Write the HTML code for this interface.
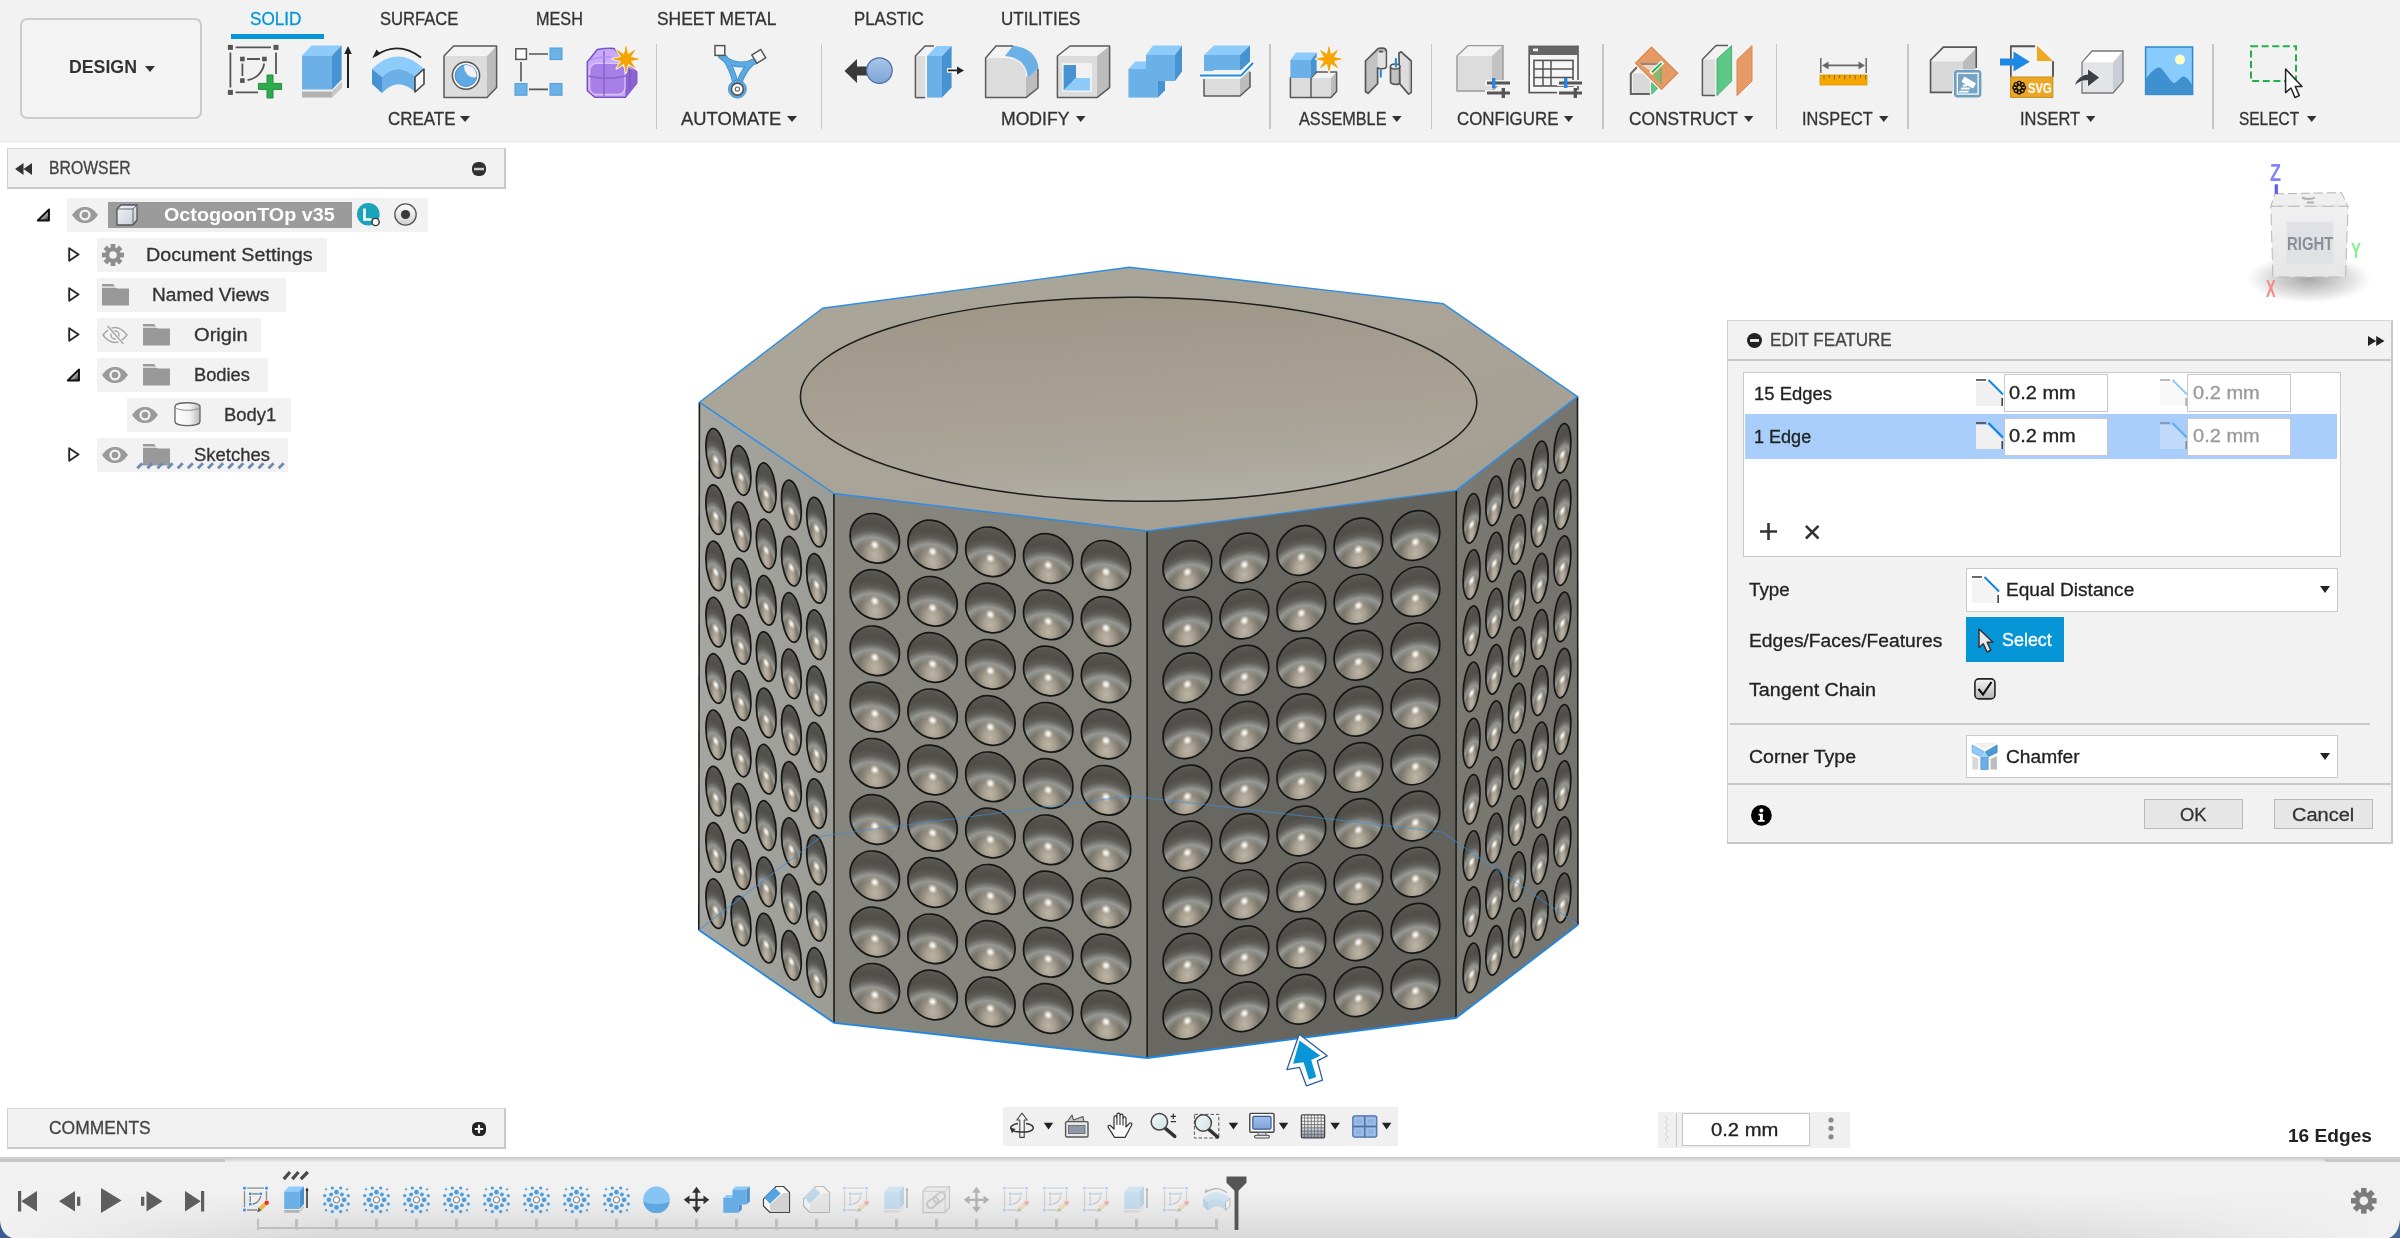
<!DOCTYPE html>
<html><head><meta charset="utf-8"><title>Fusion</title><style>
html,body{margin:0;padding:0;background:#fff;}
body{width:2400px;height:1238px;position:relative;overflow:hidden;font-family:"Liberation Sans",sans-serif;}
.t{position:absolute;white-space:nowrap;transform-origin:0 0;}
.b{position:absolute;box-sizing:border-box;}
svg{overflow:visible;}
</style></head><body>
<div class="b" style="left:0.0px;top:0.0px;width:2400.0px;height:141.0px;background:#f2f2f2;"></div>
<div class="b" style="left:0.0px;top:141.0px;width:2400.0px;height:2.0px;background:linear-gradient(#e4e4e4,#fafafa);"></div>
<div class="b" style="left:19.5px;top:17.5px;width:182.5px;height:101.0px;border:2px solid #cbcbcb;border-radius:7px;background:#f3f3f3;"></div>
<div class="t" style="left:69.0px;top:58.3px;font-size:18.56px;line-height:18.56px;color:#333;font-weight:bold;transform:scaleX(0.9555);">DESIGN</div>
<svg class="b" style="left:145.0px;top:65.5px;" width="10" height="6.0" viewBox="0 0 10 6.0"><path d="M0 0H10L5.0 6.0Z" fill="#333"/></svg>
<div class="t" style="left:250.3px;top:9.5px;font-size:18.35px;line-height:18.35px;color:#0696d7;-webkit-text-stroke:0.3px #0696d7;transform:scaleX(0.9343);">SOLID</div>
<div class="b" style="left:231.0px;top:34.0px;width:93.0px;height:4.8px;background:#0696d7;"></div>
<div class="t" style="left:380.3px;top:9.5px;font-size:18.35px;line-height:18.35px;color:#333;-webkit-text-stroke:0.3px #333;transform:scaleX(0.9048);">SURFACE</div>
<div class="t" style="left:535.9px;top:9.5px;font-size:18.35px;line-height:18.35px;color:#333;-webkit-text-stroke:0.3px #333;transform:scaleX(0.8837);">MESH</div>
<div class="t" style="left:657.3px;top:9.5px;font-size:18.35px;line-height:18.35px;color:#333;-webkit-text-stroke:0.3px #333;transform:scaleX(0.9493);">SHEET METAL</div>
<div class="t" style="left:854.3px;top:9.5px;font-size:18.35px;line-height:18.35px;color:#333;-webkit-text-stroke:0.3px #333;transform:scaleX(0.9128);">PLASTIC</div>
<div class="t" style="left:1000.9px;top:9.5px;font-size:18.35px;line-height:18.35px;color:#333;-webkit-text-stroke:0.3px #333;transform:scaleX(0.9269);">UTILITIES</div>
<div class="t" style="left:388.3px;top:109.5px;font-size:18.35px;line-height:18.35px;color:#333;-webkit-text-stroke:0.3px #333;transform:scaleX(0.9234);">CREATE</div>
<svg class="b" style="left:460.0px;top:115.5px;" width="10" height="6.0" viewBox="0 0 10 6.0"><path d="M0 0H10L5.0 6.0Z" fill="#333"/></svg>
<div class="t" style="left:681.3px;top:109.5px;font-size:18.35px;line-height:18.35px;color:#333;-webkit-text-stroke:0.3px #333;transform:scaleX(1.0010);">AUTOMATE</div>
<svg class="b" style="left:787.0px;top:115.5px;" width="10" height="6.0" viewBox="0 0 10 6.0"><path d="M0 0H10L5.0 6.0Z" fill="#333"/></svg>
<div class="t" style="left:1001.3px;top:109.5px;font-size:18.35px;line-height:18.35px;color:#333;-webkit-text-stroke:0.3px #333;transform:scaleX(0.9585);">MODIFY</div>
<svg class="b" style="left:1076.0px;top:115.5px;" width="9.5" height="6.0" viewBox="0 0 9.5 6.0"><path d="M0 0H9.5L4.75 6.0Z" fill="#333"/></svg>
<div class="t" style="left:1298.7px;top:109.5px;font-size:18.35px;line-height:18.35px;color:#333;-webkit-text-stroke:0.3px #333;transform:scaleX(0.8843);">ASSEMBLE</div>
<svg class="b" style="left:1392.0px;top:115.5px;" width="9.599999999999909" height="6.0" viewBox="0 0 9.599999999999909 6.0"><path d="M0 0H9.599999999999909L4.7999999999999545 6.0Z" fill="#333"/></svg>
<div class="t" style="left:1456.9px;top:109.5px;font-size:18.35px;line-height:18.35px;color:#333;-webkit-text-stroke:0.3px #333;transform:scaleX(0.9213);">CONFIGURE</div>
<svg class="b" style="left:1563.6px;top:115.5px;" width="9.400000000000091" height="6.0" viewBox="0 0 9.400000000000091 6.0"><path d="M0 0H9.400000000000091L4.7000000000000455 6.0Z" fill="#333"/></svg>
<div class="t" style="left:1628.9px;top:109.5px;font-size:18.35px;line-height:18.35px;color:#333;-webkit-text-stroke:0.3px #333;transform:scaleX(0.9443);">CONSTRUCT</div>
<svg class="b" style="left:1743.6px;top:115.5px;" width="9.400000000000091" height="6.0" viewBox="0 0 9.400000000000091 6.0"><path d="M0 0H9.400000000000091L4.7000000000000455 6.0Z" fill="#333"/></svg>
<div class="t" style="left:1801.9px;top:109.5px;font-size:18.35px;line-height:18.35px;color:#333;-webkit-text-stroke:0.3px #333;transform:scaleX(0.8908);">INSPECT</div>
<svg class="b" style="left:1879.0px;top:115.5px;" width="9.5" height="6.0" viewBox="0 0 9.5 6.0"><path d="M0 0H9.5L4.75 6.0Z" fill="#333"/></svg>
<div class="t" style="left:2019.7px;top:109.5px;font-size:18.35px;line-height:18.35px;color:#333;-webkit-text-stroke:0.3px #333;transform:scaleX(0.8966);">INSERT</div>
<svg class="b" style="left:2085.6px;top:115.5px;" width="9.400000000000091" height="6.0" viewBox="0 0 9.400000000000091 6.0"><path d="M0 0H9.400000000000091L4.7000000000000455 6.0Z" fill="#333"/></svg>
<div class="t" style="left:2238.7px;top:109.5px;font-size:18.35px;line-height:18.35px;color:#333;-webkit-text-stroke:0.3px #333;transform:scaleX(0.8418);">SELECT</div>
<svg class="b" style="left:2307.0px;top:115.5px;" width="9.400000000000091" height="6.0" viewBox="0 0 9.400000000000091 6.0"><path d="M0 0H9.400000000000091L4.7000000000000455 6.0Z" fill="#333"/></svg>
<div class="b" style="left:655.8px;top:44.0px;width:1.6px;height:85.0px;background:#c6c6c6;"></div>
<div class="b" style="left:820.8px;top:44.0px;width:1.6px;height:85.0px;background:#c6c6c6;"></div>
<div class="b" style="left:1269.0px;top:44.0px;width:1.6px;height:85.0px;background:#c6c6c6;"></div>
<div class="b" style="left:1430.8px;top:44.0px;width:1.6px;height:85.0px;background:#c6c6c6;"></div>
<div class="b" style="left:1602.2px;top:44.0px;width:1.6px;height:85.0px;background:#c6c6c6;"></div>
<div class="b" style="left:1775.8px;top:44.0px;width:1.6px;height:85.0px;background:#c6c6c6;"></div>
<div class="b" style="left:1907.2px;top:44.0px;width:1.6px;height:85.0px;background:#c6c6c6;"></div>
<div class="b" style="left:2212.2px;top:44.0px;width:1.6px;height:85.0px;background:#c6c6c6;"></div>
<svg class="b" style="left:0;top:0" width="2400" height="141" viewBox="0 0 2400 141"><path d="M235.5 47.4H271M230.4 52.5V87.5M276 52.5V74M235.5 92.4H258" fill="none" stroke="#555" stroke-width="1.8" /><rect x="227.9" y="44.9" width="5" height="5" fill="#555"/><rect x="273.5" y="44.9" width="5" height="5" fill="#555"/><rect x="227.9" y="89.9" width="5" height="5" fill="#555"/><path d="M247 59H260M242.4 63.5V76" fill="none" stroke="#555" stroke-width="1.8" /><path d="M264.2 63.5A20 20 0 0 1 247.5 80.2" fill="none" stroke="#555" stroke-width="1.8" /><rect x="240.1" y="56.7" width="4.6" height="4.6" fill="#555"/><rect x="262.1" y="56.7" width="4.6" height="4.6" fill="#555"/><rect x="240.1" y="78.3" width="4.6" height="4.6" fill="#555"/><path d="M267 75H273V83.4H281.6V89.4H273V98H267V89.4H258.4V83.4H267Z" fill="#2fab4e" stroke="#1f8f3c" stroke-width="1" /><polygon points="302.0,91.6 332.0,91.6 341.6,82.0 341.6,88.0 332.0,97.6 302.0,97.6" fill="#b2b2b2" /><polygon points="332.0,91.6 341.6,82.0 341.6,88.0 332.0,97.6" fill="#c9c9c9" /><polygon points="302.0,55.6 311.6,45.6 341.6,45.6 332.0,55.6" fill="#8dcbfb" /><polygon points="332.0,55.6 341.6,45.6 341.6,79.6 332.0,89.6" fill="#4793d1" /><polygon points="302.0,55.6 332.0,55.6 332.0,89.6 302.0,89.6" fill="#6bb0e6" /><path d="M348 88V50" fill="none" stroke="#222" stroke-width="2" /><polygon points="344.2,54.0 348.0,46.0 351.8,54.0" fill="#222" /><path d="M421 57.5Q398 40 375 56" fill="none" stroke="#222" stroke-width="1.8" /><polygon points="372.2,58.5 380.0,53.2 376.5,49.5" fill="#222" /><path d="M372 69Q398 44 424 69L415 77Q398 61 382 77Z" fill="#8dcbfb" /><path d="M372 69L382 77V93L372 84Z" fill="#4793d1" /><path d="M382 77Q398 61 415 77V92Q398 76 382 93Z" fill="#6bb0e6" /><path d="M415 77L424 69V84L415 92Z" fill="#fafafa" stroke="#444" stroke-width="1.6" stroke-linejoin="round"/><polygon points="444.0,56.0 453.6,46.0 496.6,46.0 487.0,56.0" fill="#f3f3f3" /><polygon points="487.0,56.0 496.6,46.0 496.6,87.6 487.0,97.6" fill="#bcbcbc" /><polygon points="444.0,56.0 487.0,56.0 487.0,97.6 444.0,97.6" fill="#dcdcdc" /><path d="M444 56L453.6 46H496.6V87.6L487 97.6H444Z" fill="none" stroke="#5a5a5a" stroke-width="1.5" stroke-linejoin="round"/><circle cx="466" cy="75.6" r="13.6" fill="#f6f6f6" stroke="#555" stroke-width="1.5"/><clipPath id="hcl"><circle cx="466" cy="75.6" r="10.6"/></clipPath><circle cx="466" cy="75.6" r="10.8" fill="#5fa9e4" stroke="#3f8aca" stroke-width="1"/><circle cx="474.4" cy="67.2" r="10.2" fill="#f2f2f2" clip-path="url(#hcl)"/><path d="M529 54H548M521 62V81.5M529 89.4H548" fill="none" stroke="#555" stroke-width="1.6" /><rect x="515.8" y="48.8" width="10.6" height="10.6" fill="#fff" stroke="#555" stroke-width="1.5"/><rect x="550" y="48" width="12" height="11.6" fill="#6ab2e8" stroke="#4f9bd6" stroke-width="1"/><rect x="515" y="83.6" width="12" height="11.6" fill="#6ab2e8" stroke="#4f9bd6" stroke-width="1"/><rect x="550" y="83.6" width="12" height="11.6" fill="#6ab2e8" stroke="#4f9bd6" stroke-width="1"/><path d="M587.3 62L597.3 49.5Q606 48 614 48.4L636.7 72V83L625.3 97.3H594.7L587.3 90.7Z" fill="#c9aaf8" stroke="#7b52c4" stroke-width="1.5" stroke-linejoin="round"/><path d="M626 66L636.7 72V83L625.3 97.3V70Z" fill="#8d63d2" /><path d="M630 70V90" fill="none" stroke="#7a52c0" stroke-width="1.2" /><rect x="589.6" y="63.4" width="35.4" height="31" rx="7" fill="#a87fe6" stroke="#d9c6fa" stroke-width="1.3"/><path d="M604 51V96" fill="none" stroke="#8a62cc" stroke-width="1.4" /><path d="M588.5 76Q606 80.5 626 76" fill="none" stroke="#8a62cc" stroke-width="1.4" /><path d="M590 60Q600 56 612 57" fill="none" stroke="#b48cf0" stroke-width="1.2" /><polygon points="626.0,45.5 627.9,54.4 635.5,49.5 630.6,57.1 639.5,59.0 630.6,60.9 635.5,68.5 627.9,63.6 626.0,72.5 624.1,63.6 616.5,68.5 621.4,60.9 612.5,59.0 621.4,57.1 616.5,49.5 624.1,54.4" fill="#f7a400" stroke="#f4f4f4" stroke-width="2.2" stroke-linejoin="round" paint-order="stroke"/><polygon points="626.0,45.5 627.9,54.4 635.5,49.5 630.6,57.1 639.5,59.0 630.6,60.9 635.5,68.5 627.9,63.6 626.0,72.5 624.1,63.6 616.5,68.5 621.4,60.9 612.5,59.0 621.4,57.1 616.5,49.5 624.1,54.4" fill="#f7a400" /><path d="M721 56Q736 70 756 61M725 58Q732.5 70 735.2 82M752.5 62Q743 71 739.6 82" fill="none" stroke="#3f8dc9" stroke-width="6" stroke-linecap="round"/><path d="M721 56Q736 70 756 61M725 58Q732.5 70 735.2 82M752.5 62Q743 71 739.6 82" fill="none" stroke="#5baae1" stroke-width="4.4" stroke-linecap="round"/><circle cx="737.4" cy="89.1" r="9" fill="#5baae1" stroke="#3f8dc9" stroke-width="0.8"/><circle cx="737.4" cy="89.1" r="6" fill="#fff" stroke="#555" stroke-width="1.7"/><circle cx="737.4" cy="89.1" r="2.1" fill="#fff" stroke="#666" stroke-width="1.2"/><rect x="715" y="45.6" width="9.8" height="9.8" fill="#f6f6f6" stroke="#555" stroke-width="1.5"/><rect x="-5.2" y="-4.8" width="10.4" height="9.6" fill="#f6f6f6" stroke="#555" stroke-width="1.5" transform="translate(758.8 56.4) rotate(-32)"/><path d="M844.5 71L857 59V66.5H872V75.5H857V83Z" fill="#3a3a3a" /><defs><linearGradient id="ppg" x1="0" y1="0" x2="0" y2="1"><stop offset="0" stop-color="#a9c6ea"/><stop offset="1" stop-color="#7ea3d6"/></linearGradient></defs><circle cx="879.4" cy="70.6" r="12.8" fill="url(#ppg)" stroke="#4c6c9c" stroke-width="1.2"/><polygon points="915.4,56.0 925.0,46.0 934.0,46.0 925.0,56.0" fill="#f3f3f3" /><polygon points="915.4,56.0 925.0,56.0 925.0,97.6 915.4,97.6" fill="#dcdcdc" /><path d="M915.4 97.6V56L925 46H934" fill="none" stroke="#5a5a5a" stroke-width="1.5" /><path d="M915.4 97.6H925" fill="none" stroke="#5a5a5a" stroke-width="1.5" /><polygon points="927.0,56.0 936.6,46.0 951.6,46.0 942.0,56.0" fill="#8dcbfb" /><polygon points="942.0,56.0 951.6,46.0 951.6,87.6 942.0,97.6" fill="#4793d1" /><polygon points="927.0,56.0 942.0,56.0 942.0,97.6 927.0,97.6" fill="#6bb0e6" /><path d="M947 70.4H962" fill="none" stroke="#fff" stroke-width="4.5" /><path d="M948 70.4H960" fill="none" stroke="#222" stroke-width="1.8" /><polygon points="957.0,66.4 964.0,70.4 957.0,74.4" fill="#222" /><path d="M985.6 58L996 46H1013L1005 57Z" fill="#f3f3f3" /><path d="M1026 77L1038 69V88L1026 97.6Z" fill="#bcbcbc" /><path d="M985.6 58H1006Q1026 60 1026 77V97.6H985.6Z" fill="#dcdcdc" /><path d="M1013 45.8Q1036 48 1038.5 68L1028 77.5Q1026 58 1005 56Z" fill="#6bb0e6" /><path d="M1013 46H996L985.6 58V97.6H1026L1038 88V69" fill="none" stroke="#5a5a5a" stroke-width="1.5" stroke-linejoin="round"/><polygon points="1057.4,56.0 1070.0,46.0 1109.6,46.0 1097.0,56.0" fill="#f3f3f3" /><polygon points="1097.0,56.0 1109.6,46.0 1109.6,87.6 1097.0,97.6" fill="#bcbcbc" /><polygon points="1057.4,56.0 1097.0,56.0 1097.0,97.6 1057.4,97.6" fill="#dcdcdc" /><path d="M1057.4 56L1070.0 46H1109.6V87.6L1097 97.6H1057.4Z" fill="none" stroke="#5a5a5a" stroke-width="1.5" stroke-linejoin="round"/><rect x="1062" y="63" width="30" height="29" fill="#f1f1f1"/><polygon points="1063.6,65.0 1076.0,65.0 1076.0,78.0 1063.6,90.4" fill="#4793d1" /><polygon points="1063.6,90.4 1076.0,78.0 1090.0,78.0 1090.0,90.4" fill="#8dcbfb" /><polygon points="1128.4,69.0 1135.4,61.6 1165.0,61.6 1158.0,69.0" fill="#8dcbfb" /><polygon points="1158.0,69.0 1165.0,61.6 1165.0,90.2 1158.0,97.6" fill="#4793d1" /><polygon points="1128.4,69.0 1158.0,69.0 1158.0,97.6 1128.4,97.6" fill="#6bb0e6" /><polygon points="1146.0,55.0 1153.0,45.6 1182.0,45.6 1175.0,55.0" fill="#8dcbfb" /><polygon points="1175.0,55.0 1182.0,45.6 1182.0,71.6 1175.0,81.0" fill="#4793d1" /><polygon points="1146.0,55.0 1175.0,55.0 1175.0,81.0 1146.0,81.0" fill="#6bb0e6" /><polygon points="1204.0,55.0 1214.0,45.6 1250.0,45.6 1240.0,55.0" fill="#8dcbfb" /><polygon points="1240.0,55.0 1250.0,45.6 1250.0,61.6 1240.0,71.0" fill="#4793d1" /><polygon points="1204.0,55.0 1240.0,55.0 1240.0,71.0 1204.0,71.0" fill="#6bb0e6" /><polygon points="1204.0,79.0 1214.0,70.0 1250.0,70.0 1240.0,79.0" fill="#f3f3f3" /><polygon points="1240.0,79.0 1250.0,70.0 1250.0,87.0 1240.0,96.0" fill="#bcbcbc" /><polygon points="1204.0,79.0 1240.0,79.0 1240.0,96.0 1204.0,96.0" fill="#dcdcdc" /><path d="M1204 79V96H1240L1250 87V72" fill="none" stroke="#5a5a5a" stroke-width="1.5" stroke-linejoin="round"/><path d="M1200 75.6H1241L1253 63" fill="none" stroke="#fff" stroke-width="4.5" /><path d="M1200 75.6H1241L1253 63" fill="none" stroke="#1e88e5" stroke-width="2" /><polygon points="1290.4,78.0 1296.0,72.0 1316.6,72.0 1311.0,78.0" fill="#f3f3f3" /><polygon points="1311.0,78.0 1316.6,72.0 1316.6,91.6 1311.0,97.6" fill="#bcbcbc" /><polygon points="1290.4,78.0 1311.0,78.0 1311.0,97.6 1290.4,97.6" fill="#dcdcdc" /><path d="M1290.4 78L1296.0 72H1316.6V91.6L1311 97.6H1290.4Z" fill="none" stroke="#5a5a5a" stroke-width="1.5" stroke-linejoin="round"/><polygon points="1311.0,78.0 1316.6,72.0 1336.6,72.0 1331.0,78.0" fill="#f3f3f3" /><polygon points="1331.0,78.0 1336.6,72.0 1336.6,91.6 1331.0,97.6" fill="#bcbcbc" /><polygon points="1311.0,78.0 1331.0,78.0 1331.0,97.6 1311.0,97.6" fill="#dcdcdc" /><path d="M1311 78L1316.6 72H1336.6V91.6L1331 97.6H1311Z" fill="none" stroke="#5a5a5a" stroke-width="1.5" stroke-linejoin="round"/><polygon points="1290.4,60.0 1296.0,52.4 1316.6,52.4 1311.0,60.0" fill="#8dcbfb" /><polygon points="1311.0,60.0 1316.6,52.4 1316.6,70.4 1311.0,78.0" fill="#4793d1" /><polygon points="1290.4,60.0 1311.0,60.0 1311.0,78.0 1290.4,78.0" fill="#6bb0e6" /><polygon points="1329.0,46.0 1330.9,54.4 1338.2,49.8 1333.6,57.1 1342.0,59.0 1333.6,60.9 1338.2,68.2 1330.9,63.6 1329.0,72.0 1327.1,63.6 1319.8,68.2 1324.4,60.9 1316.0,59.0 1324.4,57.1 1319.8,49.8 1327.1,54.4" fill="#f7a400" stroke="#f4f4f4" stroke-width="2.2" stroke-linejoin="round" paint-order="stroke"/><polygon points="1329.0,46.0 1330.9,54.4 1338.2,49.8 1333.6,57.1 1342.0,59.0 1333.6,60.9 1338.2,68.2 1330.9,63.6 1329.0,72.0 1327.1,63.6 1319.8,68.2 1324.4,60.9 1316.0,59.0 1324.4,57.1 1319.8,49.8 1327.1,54.4" fill="#f7a400" /><path d="M1365.5 61L1377.1 49.7C1378 47.4 1386.3 47.2 1386.3 51V66.8C1386.3 69 1379 69.4 1377.6 67.8V83.6L1368.1 93.3L1365.5 91.7Z" fill="#c2c2c2" stroke="#575757" stroke-width="1.7" stroke-linejoin="round"/><path d="M1377.6 52V66.5C1379.5 68.5 1385.5 68 1385.5 66.2V51.5C1384 53.5 1379 53.6 1377.6 52Z" fill="#e2e2e2" /><ellipse cx="1380.9" cy="51.6" rx="2.3" ry="1" fill="#555"/><path d="M1380.8 70V77.6" fill="none" stroke="#1e88e5" stroke-width="2" /><path d="M1398.9 53.1L1401.2 51.8L1411.2 61V92.5L1408.6 94.1L1399.6 83.6Z" fill="#dddddd" stroke="#575757" stroke-width="1.7" stroke-linejoin="round"/><path d="M1408.6 62V93L1410.4 92V61Z" fill="#c6c6c6" /><path d="M1390.5 66.3V81.5C1390.5 85 1399.6 85 1399.6 83V66.3Z" fill="#c2c2c2" stroke="#575757" stroke-width="1.7" stroke-linejoin="round"/><ellipse cx="1395.2" cy="66.4" rx="4.7" ry="2.5" fill="#f0f0f0" stroke="#575757" stroke-width="1.5"/><path d="M1395.9 58.1V67.4" fill="none" stroke="#1e88e5" stroke-width="2" /><polygon points="1457.0,56.0 1468.0,45.6 1503.0,45.6 1492.0,56.0" fill="#f3f3f3" /><polygon points="1492.0,56.0 1503.0,45.6 1503.0,80.6 1492.0,91.0" fill="#c2c2c2" /><polygon points="1457.0,56.0 1492.0,56.0 1492.0,91.0 1457.0,91.0" fill="#dcdcdc" /><path d="M1457 56L1468 45.6H1503V80.6L1492 91H1457Z" fill="none" stroke="#9a9a9a" stroke-width="1.4" stroke-linejoin="round"/><path d="M1485 83H1512M1485 93H1512" fill="none" stroke="#f2f2f2" stroke-width="6" /><path d="M1487 83H1510M1487 93H1510" fill="none" stroke="#555" stroke-width="3" /><rect x="1492" y="78" width="3.4" height="10" fill="#1e88e5"/><rect x="1501.6" y="88" width="3.4" height="10" fill="#555"/><rect x="1529.2" y="46.4" width="48.8" height="46.2" fill="#f6f6f6" stroke="#555" stroke-width="1.6"/><rect x="1529.2" y="46.4" width="48.8" height="8.6" fill="#666"/><rect x="1533" y="48.6" width="5" height="2.6" fill="#f4f4f4"/><rect x="1534" y="60.4" width="39" height="25.6" fill="none" stroke="#555" stroke-width="1.6"/><path d="M1543 60V86M1551 60V86M1534 69H1573M1534 77.4H1573" fill="none" stroke="#555" stroke-width="1.5" /><path d="M1557 83H1584M1557 93H1584" fill="none" stroke="#f2f2f2" stroke-width="6" /><path d="M1559 83H1582M1559 93H1582" fill="none" stroke="#555" stroke-width="3" /><rect x="1564" y="78" width="3.4" height="10" fill="#1e88e5"/><rect x="1573.6" y="88" width="3.4" height="10" fill="#555"/><polygon points="1632.9,73.4 1642.6,73.4 1649.9,80.4 1649.9,93.0 1632.9,93.0" fill="#d9d9d9" /><path d="M1636.8 67.3L1630.8 73.6V94.1H1649.9" fill="none" stroke="#636363" stroke-width="2" /><polygon points="1651.5,82.5 1657.8,88.3 1651.8,94.1" fill="#5cc885" stroke="#46b06e" stroke-width="0.8" stroke-linejoin="round" /><polygon points="1651.5,47.1 1677.8,73.1 1661.5,89.4 1635.5,63.1" fill="#e69a63" stroke="#f4f4f4" stroke-width="3" stroke-linejoin="round" paint-order="stroke"/><polygon points="1651.5,47.1 1677.8,73.1 1661.5,89.4 1635.5,63.1" fill="#e69a63" stroke="#d98a4e" stroke-width="1.2" stroke-linejoin="round" /><polygon points="1640.2,63.1 1657.8,63.1 1656.6,64.9 1641.8,64.9" fill="#8c8884" /><polygon points="1641.8,65.0 1656.6,65.0 1651.0,71.5" fill="#efd3be" /><polygon points="1652.6,75.7 1661.8,66.3 1661.8,84.6" fill="#8fb573" /><path d="M1661 67V84" fill="none" stroke="#7aa566" stroke-width="1.2" /><path d="M1650.6 73.6L1662.6 62" fill="none" stroke="#fbfbfb" stroke-width="4.2" /><path d="M1652 72.2L1661.5 63.1" fill="none" stroke="#1fae4a" stroke-width="1.9" /><polygon points="1702.4,59.6 1716.0,45.6 1728.0,45.6 1715.0,59.6" fill="#f3f3f3" /><polygon points="1702.4,59.6 1715.0,59.6 1715.0,95.6 1702.4,95.6" fill="#dcdcdc" /><path d="M1715 95.6H1702.4V59.6L1716 45.6H1728" fill="none" stroke="#5a5a5a" stroke-width="1.5" stroke-linejoin="round"/><polygon points="1717.0,59.0 1731.6,45.6 1731.6,81.0 1717.0,95.6" fill="#5cc885" stroke="#4ab070" stroke-width="1" stroke-linejoin="round" /><polygon points="1737.0,60.0 1752.0,45.6 1752.0,81.0 1737.0,95.6" fill="#e89a66" stroke="#d88850" stroke-width="1" stroke-linejoin="round" /><path d="M1820.8 58V73M1866.2 58V73" fill="none" stroke="#666" stroke-width="1.5" /><path d="M1825 65.4H1862" fill="none" stroke="#666" stroke-width="1.6" /><polygon points="1822.0,65.4 1828.5,61.6 1828.5,69.2" fill="#666" /><polygon points="1865.0,65.4 1858.5,61.6 1858.5,69.2" fill="#666" /><rect x="1820" y="75" width="47" height="10" fill="#f6a800" stroke="#e09400" stroke-width="0.8"/><path d="M1824.0 75V79.5M1829.2 75V78M1834.4 75V79.5M1839.6 75V78M1844.8 75V79.5M1850.0 75V78M1855.2 75V79.5M1860.4 75V78M1865.6 75V79.5" fill="none" stroke="#8a6a20" stroke-width="1" /><polygon points="1932.0,61.5 1944.4,49.1 1975.4,49.1 1963.0,61.5" fill="#f1f1f1" /><polygon points="1963.0,61.5 1975.4,49.1 1975.4,79.1 1963.0,91.5" fill="#bcbcbc" /><polygon points="1932.0,61.5 1963.0,61.5 1963.0,91.5 1932.0,91.5" fill="#d9d9d9" /><path d="M1952 92.4H1930.6V60L1943.4 47.2H1976.2V68" fill="none" stroke="#555" stroke-width="1.7" stroke-linejoin="miter"/><rect x="1954" y="70" width="27.4" height="27.4" rx="3.4" fill="#6f9fc0" stroke="#f6f6f6" stroke-width="1" paint-order="stroke"/><rect x="1956.6" y="72.6" width="22.2" height="22.2" fill="#f4f8fb"/><rect x="1958" y="74" width="19.4" height="19.4" fill="#77a3c4"/><rect x="-6.8" y="-3" width="13.6" height="6" rx="0.8" fill="#fff" transform="translate(1968.8 82.6) rotate(30)"/><path d="M1963.4 84.6H1968L1966.8 86.4H1962.2ZM1961.6 87.6H1970.4L1969.2 89.4H1960.4ZM1959.6 90.8H1969.2L1968 92.6H1958.4Z" fill="#fff" /><path d="M2010.8 76V46.4H2035M2053 62V76" fill="none" stroke="#555" stroke-width="1.6" /><rect x="2011.6" y="47.2" width="40" height="30" fill="#f4f4f4"/><path d="M2010.8 77V46.4H2035" fill="none" stroke="#555" stroke-width="1.6" /><path d="M2053 61V77" fill="none" stroke="#555" stroke-width="1.6" /><polygon points="2037.0,45.6 2053.0,61.0 2037.0,61.0" fill="#f0a822" /><path d="M2000 58.6H2013.5V51.6L2029.8 61.8L2013.5 71.4V65.4H2000Z" fill="#1e88e5" /><rect x="2010.6" y="77" width="42.2" height="20.4" fill="#eca824" stroke="#c98a18" stroke-width="1"/><circle cx="2023.5" cy="87.6" r="2" fill="none" stroke="#111" stroke-width="1.2"/><circle cx="2022.2" cy="90.6" r="2" fill="none" stroke="#111" stroke-width="1.2"/><circle cx="2019.2" cy="91.9" r="2" fill="none" stroke="#111" stroke-width="1.2"/><circle cx="2016.2" cy="90.6" r="2" fill="none" stroke="#111" stroke-width="1.2"/><circle cx="2014.9" cy="87.6" r="2" fill="none" stroke="#111" stroke-width="1.2"/><circle cx="2016.2" cy="84.6" r="2" fill="none" stroke="#111" stroke-width="1.2"/><circle cx="2019.2" cy="83.3" r="2" fill="none" stroke="#111" stroke-width="1.2"/><circle cx="2022.2" cy="84.6" r="2" fill="none" stroke="#111" stroke-width="1.2"/><text x="2028" y="92.8" font-family="Liberation Sans, sans-serif" font-weight="bold" font-size="15.4" fill="#fff" textLength="23.8" lengthAdjust="spacingAndGlyphs">SVG</text><polygon points="2082.0,62.4 2092.0,51.0 2123.0,51.0 2113.0,62.4" fill="#fdfdfd" /><polygon points="2113.0,62.4 2123.0,51.0 2123.0,81.6 2113.0,93.0" fill="#c9cdd5" /><polygon points="2082.0,62.4 2113.0,62.4 2113.0,93.0 2082.0,93.0" fill="#e3e4e8" /><path d="M2082 62.4L2092 51.0H2123V81.6L2113 93H2082Z" fill="none" stroke="#777" stroke-width="1.3" stroke-linejoin="round"/><path d="M2074.9 85Q2079 75 2088 74.6V69.6L2099.2 77.4L2088 86.2V80.2Q2080.5 79.6 2074.9 85Z" fill="#3b4048" stroke="#f4f4f4" stroke-width="1.2" paint-order="stroke"/><rect x="2145.6" y="47" width="47" height="47.4" fill="#88cbfd" stroke="#2f88cc" stroke-width="1.5"/><path d="M2145.6 79C2151 72 2156 66.5 2159.5 67.5S2169 80 2173.5 83C2176 84 2181 76 2184 76.5S2190 82 2192.6 85V94.4H2145.6Z" fill="#3f90cf" /><circle cx="2180" cy="59.6" r="5" fill="#fdfdc4"/><rect x="2251" y="46.2" width="45" height="34.8" fill="none" stroke="#22b04a" stroke-width="2" stroke-dasharray="7 3.6"/><path d="M2285.6 69V92.6L2291 88L2295 97.5L2299.3 95.6L2295.3 86.5H2302Z" fill="#fff" stroke="#222" stroke-width="1.5" stroke-linejoin="round"/></svg>
<div class="b" style="left:7.3px;top:148.3px;width:498.7px;height:40.7px;background:#f2f2f2;border-top:1px solid #dadada;border-left:1.3px solid #cfcfcf;border-right:2px solid #c8c8c8;border-bottom:2px solid #c8c8c8;"></div>
<div class="t" style="left:49.2px;top:159.7px;font-size:17.94px;line-height:17.94px;color:#444;-webkit-text-stroke:0.3px #444;transform:scaleX(0.8803);">BROWSER</div>
<svg class="b" style="left:14.5px;top:163.0px;" width="17" height="12" viewBox="0 0 17 12"><path d="M8.5 0V12L0 6ZM17 0V12L8.5 6Z" fill="#333"/></svg>
<svg class="b" style="left:472.0px;top:162.0px;" width="14" height="14" viewBox="0 0 14 14"><rect width="14" height="14" rx="6" fill="#303030"/><rect x="2" y="5.8" width="10" height="2.5" fill="#ccc"/></svg>
<div class="b" style="left:67.0px;top:198.0px;width:361.0px;height:33.6px;background:#f2f2f2;"></div>
<svg class="b" style="left:37.0px;top:209.0px;" width="12.5" height="12" viewBox="0 0 12.5 12"><defs><linearGradient id="eo585" x1="0" y1="0" x2="1" y2="1"><stop offset="0.45" stop-color="#ddd"/><stop offset="1" stop-color="#111"/></linearGradient></defs><path d="M12 0.5V11.5H0.8Z" fill="url(#eo585)" stroke="#111" stroke-width="1.9" stroke-linejoin="round"/></svg>
<svg class="b" style="left:72.0px;top:207.0px;" width="26" height="16" viewBox="0 0 26 16"><path d="M0 8C5 1 9 0 13 0S21 1 26 8C21 15 17 16 13 16S5 15 0 8Z" fill="#9a9a9a"/><circle cx="13" cy="8" r="5.6" fill="#f2f2f2"/><circle cx="13" cy="8" r="3.3" fill="#9a9a9a"/></svg>
<div class="b" style="left:108.0px;top:201.7px;width:243.6px;height:26.1px;background:#9b9b9b;"></div>
<svg class="b" style="left:115.8px;top:204.0px;" width="22" height="22" viewBox="0 0 22 22"><defs><linearGradient id="cb1" x1="0" y1="0" x2="1" y2="1"><stop offset="0" stop-color="#f4f6fa"/><stop offset="1" stop-color="#c3c9d6"/></linearGradient></defs><path d="M1 5L5 1H21V16L17 21H1Z" fill="url(#cb1)" stroke="#555" stroke-width="1.3" stroke-linejoin="round"/><path d="M1 5H17V21M17 5L21 1" fill="none" stroke="#666" stroke-width="1"/></svg>
<div class="t" style="left:163.7px;top:205.8px;font-size:18.56px;line-height:18.56px;color:#fff;font-weight:bold;transform:scaleX(1.0641);">OctogoonTOp v35</div>
<svg class="b" style="left:357.0px;top:203.0px;" width="24" height="24" viewBox="0 0 24 24"><circle cx="11.3" cy="11.3" r="11.3" fill="#1ba3b9"/><path d="M7.5 5.5V16.5H14.5" fill="none" stroke="#fff" stroke-width="2.6"/><circle cx="18.6" cy="19" r="3.6" fill="#fff" stroke="#333" stroke-width="1.4"/></svg>
<svg class="b" style="left:393.5px;top:203.0px;" width="23" height="23" viewBox="0 0 23 23"><defs><linearGradient id="rd1" x1="0" y1="0" x2="0" y2="1"><stop offset="0" stop-color="#fff"/><stop offset="1" stop-color="#d0d0d0"/></linearGradient></defs><circle cx="11.5" cy="11.5" r="10.7" fill="url(#rd1)" stroke="#555" stroke-width="1.3"/><circle cx="11.5" cy="11.5" r="4.6" fill="#3a3a3a"/></svg>
<div class="b" style="left:96.9px;top:238.0px;width:229.7px;height:33.6px;background:#f2f2f2;"></div>
<svg class="b" style="left:67.5px;top:247.0px;" width="11" height="15" viewBox="0 0 11 15"><path d="M1.2 1.2L10.6 7.5L1.2 13.8Z" fill="#fff" stroke="#2a2a2a" stroke-width="1.9" stroke-linejoin="round"/></svg>
<svg class="b" style="left:101.8px;top:243.5px;" width="22" height="22" viewBox="0 0 22 22"><g transform="translate(11 11)"><rect x="-2.36" y="-11.00" width="4.73" height="5.50" transform="rotate(0.0)" fill="#8e8e8e"/><rect x="-2.36" y="-11.00" width="4.73" height="5.50" transform="rotate(45.0)" fill="#8e8e8e"/><rect x="-2.36" y="-11.00" width="4.73" height="5.50" transform="rotate(90.0)" fill="#8e8e8e"/><rect x="-2.36" y="-11.00" width="4.73" height="5.50" transform="rotate(135.0)" fill="#8e8e8e"/><rect x="-2.36" y="-11.00" width="4.73" height="5.50" transform="rotate(180.0)" fill="#8e8e8e"/><rect x="-2.36" y="-11.00" width="4.73" height="5.50" transform="rotate(225.0)" fill="#8e8e8e"/><rect x="-2.36" y="-11.00" width="4.73" height="5.50" transform="rotate(270.0)" fill="#8e8e8e"/><rect x="-2.36" y="-11.00" width="4.73" height="5.50" transform="rotate(315.0)" fill="#8e8e8e"/><circle r="7.70" fill="#8e8e8e"/><circle r="3.74" fill="#f2f2f2"/></g></svg>
<div class="t" style="left:145.7px;top:246.1px;font-size:18.35px;line-height:18.35px;color:#333;-webkit-text-stroke:0.3px #333;transform:scaleX(1.0747);">Document Settings</div>
<div class="b" style="left:96.9px;top:278.0px;width:189.6px;height:33.6px;background:#f2f2f2;"></div>
<svg class="b" style="left:67.5px;top:287.0px;" width="11" height="15" viewBox="0 0 11 15"><path d="M1.2 1.2L10.6 7.5L1.2 13.8Z" fill="#fff" stroke="#2a2a2a" stroke-width="1.9" stroke-linejoin="round"/></svg>
<svg class="b" style="left:101.8px;top:283.8px;" width="27" height="21.6" viewBox="0 0 27 21.6"><path d="M0 0H11L13 2.6H0Z" fill="#999"/><path d="M0 3.8H13.5L15.5 4.6H27V21.6H0Z" fill="#999"/></svg>
<div class="t" style="left:152.3px;top:286.1px;font-size:18.35px;line-height:18.35px;color:#333;-webkit-text-stroke:0.3px #333;transform:scaleX(1.0400);">Named Views</div>
<div class="b" style="left:96.9px;top:318.0px;width:164.6px;height:33.6px;background:#f2f2f2;"></div>
<svg class="b" style="left:67.5px;top:327.0px;" width="11" height="15" viewBox="0 0 11 15"><path d="M1.2 1.2L10.6 7.5L1.2 13.8Z" fill="#fff" stroke="#2a2a2a" stroke-width="1.9" stroke-linejoin="round"/></svg>
<svg class="b" style="left:101.8px;top:325.0px;" width="26" height="20" viewBox="0 0 26 20"><path d="M1 10C6 3.5 9.5 2.5 13 2.5S20 3.5 25 10C20 16.5 16.5 17.5 13 17.5S6 16.5 1 10Z" fill="none" stroke="#a8a8a8" stroke-width="1.5"/><circle cx="13" cy="10" r="4" fill="none" stroke="#a8a8a8" stroke-width="1.5"/><path d="M5 1L21 19" stroke="#f2f2f2" stroke-width="4"/><path d="M5.5 1L21.5 19" stroke="#a8a8a8" stroke-width="1.5"/></svg>
<svg class="b" style="left:142.5px;top:323.8px;" width="27" height="21.6" viewBox="0 0 27 21.6"><path d="M0 0H11L13 2.6H0Z" fill="#999"/><path d="M0 3.8H13.5L15.5 4.6H27V21.6H0Z" fill="#999"/></svg>
<div class="t" style="left:193.7px;top:326.1px;font-size:18.35px;line-height:18.35px;color:#333;-webkit-text-stroke:0.3px #333;transform:scaleX(1.0968);">Origin</div>
<div class="b" style="left:96.9px;top:358.0px;width:171.0px;height:33.6px;background:#f2f2f2;"></div>
<svg class="b" style="left:67.0px;top:369.0px;" width="12.5" height="12" viewBox="0 0 12.5 12"><defs><linearGradient id="eo1045" x1="0" y1="0" x2="1" y2="1"><stop offset="0.45" stop-color="#ddd"/><stop offset="1" stop-color="#111"/></linearGradient></defs><path d="M12 0.5V11.5H0.8Z" fill="url(#eo1045)" stroke="#111" stroke-width="1.9" stroke-linejoin="round"/></svg>
<svg class="b" style="left:101.8px;top:367.0px;" width="26" height="16" viewBox="0 0 26 16"><path d="M0 8C5 1 9 0 13 0S21 1 26 8C21 15 17 16 13 16S5 15 0 8Z" fill="#9a9a9a"/><circle cx="13" cy="8" r="5.6" fill="#f2f2f2"/><circle cx="13" cy="8" r="3.3" fill="#9a9a9a"/></svg>
<svg class="b" style="left:142.5px;top:363.8px;" width="27" height="21.6" viewBox="0 0 27 21.6"><path d="M0 0H11L13 2.6H0Z" fill="#999"/><path d="M0 3.8H13.5L15.5 4.6H27V21.6H0Z" fill="#999"/></svg>
<div class="t" style="left:193.7px;top:366.1px;font-size:18.35px;line-height:18.35px;color:#333;-webkit-text-stroke:0.3px #333;transform:scaleX(0.9972);">Bodies</div>
<div class="b" style="left:126.8px;top:398.0px;width:164.6px;height:33.6px;background:#f2f2f2;"></div>
<svg class="b" style="left:131.8px;top:407.0px;" width="26" height="16" viewBox="0 0 26 16"><path d="M0 8C5 1 9 0 13 0S21 1 26 8C21 15 17 16 13 16S5 15 0 8Z" fill="#9a9a9a"/><circle cx="13" cy="8" r="5.6" fill="#f2f2f2"/><circle cx="13" cy="8" r="3.3" fill="#9a9a9a"/></svg>
<svg class="b" style="left:173.6px;top:402.0px;" width="27" height="25" viewBox="0 0 27 25"><defs><linearGradient id="cy1" x1="0" y1="0" x2="1" y2="0"><stop offset="0" stop-color="#fff"/><stop offset="0.6" stop-color="#f2f2f2"/><stop offset="1" stop-color="#b8b8b8"/></linearGradient></defs><path d="M1 4.5V19.5C1 25 26 25 26 19.5V4.5C26 -0.5 1 -0.5 1 4.5Z" fill="url(#cy1)" stroke="#666" stroke-width="1.3"/><path d="M1 4.5C1 9.5 26 9.5 26 4.5" fill="none" stroke="#888" stroke-width="1"/></svg>
<div class="t" style="left:223.7px;top:406.1px;font-size:18.35px;line-height:18.35px;color:#333;-webkit-text-stroke:0.3px #333;transform:scaleX(1.0052);">Body1</div>
<div class="b" style="left:96.9px;top:438.0px;width:191.1px;height:33.6px;background:#f2f2f2;"></div>
<svg class="b" style="left:67.5px;top:447.0px;" width="11" height="15" viewBox="0 0 11 15"><path d="M1.2 1.2L10.6 7.5L1.2 13.8Z" fill="#fff" stroke="#2a2a2a" stroke-width="1.9" stroke-linejoin="round"/></svg>
<svg class="b" style="left:101.8px;top:447.0px;" width="26" height="16" viewBox="0 0 26 16"><path d="M0 8C5 1 9 0 13 0S21 1 26 8C21 15 17 16 13 16S5 15 0 8Z" fill="#9a9a9a"/><circle cx="13" cy="8" r="5.6" fill="#f2f2f2"/><circle cx="13" cy="8" r="3.3" fill="#9a9a9a"/></svg>
<svg class="b" style="left:142.5px;top:443.8px;" width="27" height="21.6" viewBox="0 0 27 21.6"><path d="M0 0H11L13 2.6H0Z" fill="#999"/><path d="M0 3.8H13.5L15.5 4.6H27V21.6H0Z" fill="#999"/></svg>
<div class="t" style="left:193.7px;top:446.1px;font-size:18.35px;line-height:18.35px;color:#333;-webkit-text-stroke:0.3px #333;transform:scaleX(1.0063);">Sketches</div>
<svg class="b" style="left:0.0px;top:0.0px;" width="10" height="10" viewBox="0 0 10 10"><path d="M137.3 468.2L142.3 463.2M147.4 468.2L152.4 463.2M157.5 468.2L162.5 463.2M167.6 468.2L172.6 463.2M177.7 468.2L182.7 463.2M187.8 468.2L192.8 463.2M197.9 468.2L202.9 463.2M208.0 468.2L213.0 463.2M218.1 468.2L223.1 463.2M228.2 468.2L233.2 463.2M238.3 468.2L243.3 463.2M248.4 468.2L253.4 463.2M258.5 468.2L263.5 463.2M268.6 468.2L273.6 463.2M278.7 468.2L283.7 463.2" stroke="#6c8cb4" stroke-width="2.9" fill="none"/></svg>
<svg class="b" style="left:0;top:0" width="2400" height="1238" viewBox="0 0 2400 1238"><defs>
<radialGradient id="dg" gradientUnits="userSpaceOnUse" cx="0" cy="30" r="56">
<stop offset="0" stop-color="#7e786c"/><stop offset="0.44" stop-color="#7a766c"/><stop offset="0.5" stop-color="#8a8a84"/><stop offset="0.55" stop-color="#969894"/><stop offset="0.6" stop-color="#7c7c78"/><stop offset="0.67" stop-color="#5e5c57"/><stop offset="0.78" stop-color="#504e49"/><stop offset="0.9" stop-color="#55534e"/><stop offset="1" stop-color="#66645e"/>
</radialGradient>
<radialGradient id="hl" cx="0.5" cy="0.5" r="0.5"><stop offset="0" stop-color="#fff" stop-opacity="1"/><stop offset="0.35" stop-color="#fff" stop-opacity="0.75"/><stop offset="1" stop-color="#d8d0c0" stop-opacity="0"/></radialGradient>
<radialGradient id="cone" cx="0.5" cy="0.5" r="0.5"><stop offset="0" stop-color="#bdb5a5" stop-opacity="1"/><stop offset="0.45" stop-color="#b2aa9a" stop-opacity="0.8"/><stop offset="1" stop-color="#a8a090" stop-opacity="0"/></radialGradient>
<clipPath id="dcl"><circle r="24.6"/></clipPath>
<linearGradient id="gL" x1="0" y1="0" x2="1" y2="0"><stop offset="0" stop-color="#a6a6a0"/><stop offset="1" stop-color="#9c9c96"/></linearGradient>
<linearGradient id="gFL" x1="0" y1="0" x2="1" y2="0"><stop offset="0" stop-color="#86857e"/><stop offset="1" stop-color="#83827b"/></linearGradient>
<linearGradient id="gFR" x1="0" y1="0" x2="1" y2="0"><stop offset="0" stop-color="#696862"/><stop offset="1" stop-color="#62615c"/></linearGradient>
<linearGradient id="gR" x1="0" y1="0" x2="1" y2="0"><stop offset="0" stop-color="#7a7972"/><stop offset="1" stop-color="#74736d"/></linearGradient>
<linearGradient id="gTop" x1="0" y1="0" x2="1" y2="1"><stop offset="0" stop-color="#a9a69a"/><stop offset="0.6" stop-color="#a8a396"/><stop offset="1" stop-color="#a39d92"/></linearGradient>
<linearGradient id="gBowl" x1="0.35" y1="0" x2="0.6" y2="1"><stop offset="0" stop-color="#9e9687"/><stop offset="0.45" stop-color="#a79f91"/><stop offset="0.75" stop-color="#aaa599"/><stop offset="1" stop-color="#b1afa6"/></linearGradient>
</defs><polygon points="699.4,402.2 833.9,493.5 834.0,1022.8 698.8,930.0" fill="url(#gL)"/><polygon points="833.9,493.5 1147.1,531.0 1147.2,1058.0 834.0,1022.8" fill="url(#gFL)"/><polygon points="1147.1,531.0 1456.3,490.4 1456.0,1018.0 1147.2,1058.0" fill="url(#gFR)"/><polygon points="1456.3,490.4 1577.5,396.6 1578.0,924.8 1456.0,1018.0" fill="url(#gR)"/><polygon points="1129.4,267.2 1443.5,303.8 1577.5,396.6 1456.3,490.4 1147.1,531.0 833.9,493.5 699.4,402.2 822.5,308.2" fill="url(#gTop)"/><ellipse cx="1138.6" cy="399.3" rx="338.2" ry="102" fill="url(#gBowl)" stroke="#1c1c1c" stroke-width="1.5" transform="rotate(0.5 1138.6 399.3)"/><defs><g id="dm1"><circle r="24.6" fill="url(#dg)"/><ellipse cx="0" cy="17" rx="15" ry="19" fill="url(#cone)" clip-path="url(#dcl)"/><ellipse cy="6.5" rx="9.77" ry="5.2" fill="url(#hl)"/><circle r="24.6" fill="none" stroke="#161616" stroke-width="1.7" vector-effect="non-scaling-stroke"/></g></defs><use href="#dm1" transform="matrix(0.4025 0.2748 0 0.97 715.8 453.3)"/><use href="#dm1" transform="matrix(0.4025 0.2748 0 0.97 715.8 509.6)"/><use href="#dm1" transform="matrix(0.4025 0.2748 0 0.97 715.8 565.9)"/><use href="#dm1" transform="matrix(0.4025 0.2748 0 0.97 715.8 622.2)"/><use href="#dm1" transform="matrix(0.4025 0.2748 0 0.97 715.8 678.5)"/><use href="#dm1" transform="matrix(0.4025 0.2748 0 0.97 715.8 734.8)"/><use href="#dm1" transform="matrix(0.4025 0.2748 0 0.97 715.8 791.1)"/><use href="#dm1" transform="matrix(0.4025 0.2748 0 0.97 715.8 847.4)"/><use href="#dm1" transform="matrix(0.4025 0.2748 0 0.97 715.8 903.7)"/><use href="#dm1" transform="matrix(0.4025 0.2748 0 0.97 741.0 470.5)"/><use href="#dm1" transform="matrix(0.4025 0.2748 0 0.97 741.0 526.8)"/><use href="#dm1" transform="matrix(0.4025 0.2748 0 0.97 741.0 583.1)"/><use href="#dm1" transform="matrix(0.4025 0.2748 0 0.97 741.0 639.4)"/><use href="#dm1" transform="matrix(0.4025 0.2748 0 0.97 741.0 695.7)"/><use href="#dm1" transform="matrix(0.4025 0.2748 0 0.97 741.0 752.0)"/><use href="#dm1" transform="matrix(0.4025 0.2748 0 0.97 741.0 808.3)"/><use href="#dm1" transform="matrix(0.4025 0.2748 0 0.97 741.0 864.6)"/><use href="#dm1" transform="matrix(0.4025 0.2748 0 0.97 741.0 920.9)"/><use href="#dm1" transform="matrix(0.4025 0.2748 0 0.97 766.2 487.7)"/><use href="#dm1" transform="matrix(0.4025 0.2748 0 0.97 766.2 544.0)"/><use href="#dm1" transform="matrix(0.4025 0.2748 0 0.97 766.2 600.3)"/><use href="#dm1" transform="matrix(0.4025 0.2748 0 0.97 766.2 656.6)"/><use href="#dm1" transform="matrix(0.4025 0.2748 0 0.97 766.2 712.9)"/><use href="#dm1" transform="matrix(0.4025 0.2748 0 0.97 766.2 769.2)"/><use href="#dm1" transform="matrix(0.4025 0.2748 0 0.97 766.2 825.5)"/><use href="#dm1" transform="matrix(0.4025 0.2748 0 0.97 766.2 881.8)"/><use href="#dm1" transform="matrix(0.4025 0.2748 0 0.97 766.2 938.1)"/><use href="#dm1" transform="matrix(0.4025 0.2748 0 0.97 791.4 504.9)"/><use href="#dm1" transform="matrix(0.4025 0.2748 0 0.97 791.4 561.2)"/><use href="#dm1" transform="matrix(0.4025 0.2748 0 0.97 791.4 617.5)"/><use href="#dm1" transform="matrix(0.4025 0.2748 0 0.97 791.4 673.8)"/><use href="#dm1" transform="matrix(0.4025 0.2748 0 0.97 791.4 730.1)"/><use href="#dm1" transform="matrix(0.4025 0.2748 0 0.97 791.4 786.4)"/><use href="#dm1" transform="matrix(0.4025 0.2748 0 0.97 791.4 842.7)"/><use href="#dm1" transform="matrix(0.4025 0.2748 0 0.97 791.4 899.0)"/><use href="#dm1" transform="matrix(0.4025 0.2748 0 0.97 791.4 955.3)"/><use href="#dm1" transform="matrix(0.4025 0.2748 0 0.97 816.6 522.1)"/><use href="#dm1" transform="matrix(0.4025 0.2748 0 0.97 816.6 578.4)"/><use href="#dm1" transform="matrix(0.4025 0.2748 0 0.97 816.6 634.7)"/><use href="#dm1" transform="matrix(0.4025 0.2748 0 0.97 816.6 691.0)"/><use href="#dm1" transform="matrix(0.4025 0.2748 0 0.97 816.6 747.3)"/><use href="#dm1" transform="matrix(0.4025 0.2748 0 0.97 816.6 803.6)"/><use href="#dm1" transform="matrix(0.4025 0.2748 0 0.97 816.6 859.9)"/><use href="#dm1" transform="matrix(0.4025 0.2748 0 0.97 816.6 916.2)"/><use href="#dm1" transform="matrix(0.4025 0.2748 0 0.97 816.6 972.5)"/><defs><g id="dm2"><circle r="24.6" fill="url(#dg)"/><ellipse cx="0" cy="17" rx="15" ry="19" fill="url(#cone)" clip-path="url(#dcl)"/><ellipse cy="6.5" rx="5.20" ry="5.2" fill="url(#hl)"/><circle r="24.6" fill="none" stroke="#161616" stroke-width="1.7" vector-effect="non-scaling-stroke"/></g></defs><use href="#dm2" transform="matrix(1.0052 0.1174 0 1.0 874.8 538.3)"/><use href="#dm2" transform="matrix(1.0052 0.1174 0 1.0 874.8 594.5)"/><use href="#dm2" transform="matrix(1.0052 0.1174 0 1.0 874.8 650.8)"/><use href="#dm2" transform="matrix(1.0052 0.1174 0 1.0 874.8 707.0)"/><use href="#dm2" transform="matrix(1.0052 0.1174 0 1.0 874.8 763.3)"/><use href="#dm2" transform="matrix(1.0052 0.1174 0 1.0 874.8 819.5)"/><use href="#dm2" transform="matrix(1.0052 0.1174 0 1.0 874.8 875.8)"/><use href="#dm2" transform="matrix(1.0052 0.1174 0 1.0 874.8 932.0)"/><use href="#dm2" transform="matrix(1.0052 0.1174 0 1.0 874.8 988.3)"/><use href="#dm2" transform="matrix(1.0052 0.1174 0 1.0 932.6 545.0)"/><use href="#dm2" transform="matrix(1.0052 0.1174 0 1.0 932.6 601.3)"/><use href="#dm2" transform="matrix(1.0052 0.1174 0 1.0 932.6 657.5)"/><use href="#dm2" transform="matrix(1.0052 0.1174 0 1.0 932.6 713.8)"/><use href="#dm2" transform="matrix(1.0052 0.1174 0 1.0 932.6 770.0)"/><use href="#dm2" transform="matrix(1.0052 0.1174 0 1.0 932.6 826.3)"/><use href="#dm2" transform="matrix(1.0052 0.1174 0 1.0 932.6 882.5)"/><use href="#dm2" transform="matrix(1.0052 0.1174 0 1.0 932.6 938.8)"/><use href="#dm2" transform="matrix(1.0052 0.1174 0 1.0 932.6 995.0)"/><use href="#dm2" transform="matrix(1.0052 0.1174 0 1.0 990.4 551.8)"/><use href="#dm2" transform="matrix(1.0052 0.1174 0 1.0 990.4 608.0)"/><use href="#dm2" transform="matrix(1.0052 0.1174 0 1.0 990.4 664.3)"/><use href="#dm2" transform="matrix(1.0052 0.1174 0 1.0 990.4 720.5)"/><use href="#dm2" transform="matrix(1.0052 0.1174 0 1.0 990.4 776.8)"/><use href="#dm2" transform="matrix(1.0052 0.1174 0 1.0 990.4 833.0)"/><use href="#dm2" transform="matrix(1.0052 0.1174 0 1.0 990.4 889.3)"/><use href="#dm2" transform="matrix(1.0052 0.1174 0 1.0 990.4 945.5)"/><use href="#dm2" transform="matrix(1.0052 0.1174 0 1.0 990.4 1001.8)"/><use href="#dm2" transform="matrix(1.0052 0.1174 0 1.0 1048.2 558.5)"/><use href="#dm2" transform="matrix(1.0052 0.1174 0 1.0 1048.2 614.8)"/><use href="#dm2" transform="matrix(1.0052 0.1174 0 1.0 1048.2 671.0)"/><use href="#dm2" transform="matrix(1.0052 0.1174 0 1.0 1048.2 727.3)"/><use href="#dm2" transform="matrix(1.0052 0.1174 0 1.0 1048.2 783.5)"/><use href="#dm2" transform="matrix(1.0052 0.1174 0 1.0 1048.2 839.8)"/><use href="#dm2" transform="matrix(1.0052 0.1174 0 1.0 1048.2 896.0)"/><use href="#dm2" transform="matrix(1.0052 0.1174 0 1.0 1048.2 952.3)"/><use href="#dm2" transform="matrix(1.0052 0.1174 0 1.0 1048.2 1008.5)"/><use href="#dm2" transform="matrix(1.0052 0.1174 0 1.0 1106.0 565.3)"/><use href="#dm2" transform="matrix(1.0052 0.1174 0 1.0 1106.0 621.5)"/><use href="#dm2" transform="matrix(1.0052 0.1174 0 1.0 1106.0 677.8)"/><use href="#dm2" transform="matrix(1.0052 0.1174 0 1.0 1106.0 734.0)"/><use href="#dm2" transform="matrix(1.0052 0.1174 0 1.0 1106.0 790.3)"/><use href="#dm2" transform="matrix(1.0052 0.1174 0 1.0 1106.0 846.5)"/><use href="#dm2" transform="matrix(1.0052 0.1174 0 1.0 1106.0 902.8)"/><use href="#dm2" transform="matrix(1.0052 0.1174 0 1.0 1106.0 959.0)"/><use href="#dm2" transform="matrix(1.0052 0.1174 0 1.0 1106.0 1015.3)"/><defs><g id="dm3"><circle r="24.6" fill="url(#dg)"/><ellipse cx="0" cy="17" rx="15" ry="19" fill="url(#cone)" clip-path="url(#dcl)"/><ellipse cy="6.5" rx="5.20" ry="5.2" fill="url(#hl)"/><circle r="24.6" fill="none" stroke="#161616" stroke-width="1.7" vector-effect="non-scaling-stroke"/></g></defs><use href="#dm3" transform="matrix(0.9913 -0.1304 0 1.0 1187.4 565.5)"/><use href="#dm3" transform="matrix(0.9913 -0.1304 0 1.0 1187.4 621.6)"/><use href="#dm3" transform="matrix(0.9913 -0.1304 0 1.0 1187.4 677.7)"/><use href="#dm3" transform="matrix(0.9913 -0.1304 0 1.0 1187.4 733.8)"/><use href="#dm3" transform="matrix(0.9913 -0.1304 0 1.0 1187.4 789.9)"/><use href="#dm3" transform="matrix(0.9913 -0.1304 0 1.0 1187.4 846.0)"/><use href="#dm3" transform="matrix(0.9913 -0.1304 0 1.0 1187.4 902.1)"/><use href="#dm3" transform="matrix(0.9913 -0.1304 0 1.0 1187.4 958.2)"/><use href="#dm3" transform="matrix(0.9913 -0.1304 0 1.0 1187.4 1014.3)"/><use href="#dm3" transform="matrix(0.9913 -0.1304 0 1.0 1244.4 558.0)"/><use href="#dm3" transform="matrix(0.9913 -0.1304 0 1.0 1244.4 614.1)"/><use href="#dm3" transform="matrix(0.9913 -0.1304 0 1.0 1244.4 670.2)"/><use href="#dm3" transform="matrix(0.9913 -0.1304 0 1.0 1244.4 726.3)"/><use href="#dm3" transform="matrix(0.9913 -0.1304 0 1.0 1244.4 782.4)"/><use href="#dm3" transform="matrix(0.9913 -0.1304 0 1.0 1244.4 838.5)"/><use href="#dm3" transform="matrix(0.9913 -0.1304 0 1.0 1244.4 894.6)"/><use href="#dm3" transform="matrix(0.9913 -0.1304 0 1.0 1244.4 950.7)"/><use href="#dm3" transform="matrix(0.9913 -0.1304 0 1.0 1244.4 1006.8)"/><use href="#dm3" transform="matrix(0.9913 -0.1304 0 1.0 1301.4 550.5)"/><use href="#dm3" transform="matrix(0.9913 -0.1304 0 1.0 1301.4 606.6)"/><use href="#dm3" transform="matrix(0.9913 -0.1304 0 1.0 1301.4 662.7)"/><use href="#dm3" transform="matrix(0.9913 -0.1304 0 1.0 1301.4 718.8)"/><use href="#dm3" transform="matrix(0.9913 -0.1304 0 1.0 1301.4 774.9)"/><use href="#dm3" transform="matrix(0.9913 -0.1304 0 1.0 1301.4 831.0)"/><use href="#dm3" transform="matrix(0.9913 -0.1304 0 1.0 1301.4 887.1)"/><use href="#dm3" transform="matrix(0.9913 -0.1304 0 1.0 1301.4 943.2)"/><use href="#dm3" transform="matrix(0.9913 -0.1304 0 1.0 1301.4 999.3)"/><use href="#dm3" transform="matrix(0.9913 -0.1304 0 1.0 1358.4 543.0)"/><use href="#dm3" transform="matrix(0.9913 -0.1304 0 1.0 1358.4 599.1)"/><use href="#dm3" transform="matrix(0.9913 -0.1304 0 1.0 1358.4 655.2)"/><use href="#dm3" transform="matrix(0.9913 -0.1304 0 1.0 1358.4 711.3)"/><use href="#dm3" transform="matrix(0.9913 -0.1304 0 1.0 1358.4 767.4)"/><use href="#dm3" transform="matrix(0.9913 -0.1304 0 1.0 1358.4 823.5)"/><use href="#dm3" transform="matrix(0.9913 -0.1304 0 1.0 1358.4 879.6)"/><use href="#dm3" transform="matrix(0.9913 -0.1304 0 1.0 1358.4 935.7)"/><use href="#dm3" transform="matrix(0.9913 -0.1304 0 1.0 1358.4 991.8)"/><use href="#dm3" transform="matrix(0.9913 -0.1304 0 1.0 1415.4 535.5)"/><use href="#dm3" transform="matrix(0.9913 -0.1304 0 1.0 1415.4 591.6)"/><use href="#dm3" transform="matrix(0.9913 -0.1304 0 1.0 1415.4 647.7)"/><use href="#dm3" transform="matrix(0.9913 -0.1304 0 1.0 1415.4 703.8)"/><use href="#dm3" transform="matrix(0.9913 -0.1304 0 1.0 1415.4 759.9)"/><use href="#dm3" transform="matrix(0.9913 -0.1304 0 1.0 1415.4 816.0)"/><use href="#dm3" transform="matrix(0.9913 -0.1304 0 1.0 1415.4 872.1)"/><use href="#dm3" transform="matrix(0.9913 -0.1304 0 1.0 1415.4 928.2)"/><use href="#dm3" transform="matrix(0.9913 -0.1304 0 1.0 1415.4 984.3)"/><defs><g id="dm4"><circle r="24.6" fill="url(#dg)"/><ellipse cx="0" cy="17" rx="15" ry="19" fill="url(#cone)" clip-path="url(#dcl)"/><ellipse cy="6.5" rx="11.43" ry="5.2" fill="url(#hl)"/><circle r="24.6" fill="none" stroke="#161616" stroke-width="1.7" vector-effect="non-scaling-stroke"/></g></defs><use href="#dm4" transform="matrix(0.3443 -0.2655 0 0.97 1471.6 518.3)"/><use href="#dm4" transform="matrix(0.3443 -0.2655 0 0.97 1471.6 574.5)"/><use href="#dm4" transform="matrix(0.3443 -0.2655 0 0.97 1471.6 630.7)"/><use href="#dm4" transform="matrix(0.3443 -0.2655 0 0.97 1471.6 686.9)"/><use href="#dm4" transform="matrix(0.3443 -0.2655 0 0.97 1471.6 743.1)"/><use href="#dm4" transform="matrix(0.3443 -0.2655 0 0.97 1471.6 799.3)"/><use href="#dm4" transform="matrix(0.3443 -0.2655 0 0.97 1471.6 855.5)"/><use href="#dm4" transform="matrix(0.3443 -0.2655 0 0.97 1471.6 911.7)"/><use href="#dm4" transform="matrix(0.3443 -0.2655 0 0.97 1471.6 967.9)"/><use href="#dm4" transform="matrix(0.3443 -0.2655 0 0.97 1494.3 500.8)"/><use href="#dm4" transform="matrix(0.3443 -0.2655 0 0.97 1494.3 557.0)"/><use href="#dm4" transform="matrix(0.3443 -0.2655 0 0.97 1494.3 613.2)"/><use href="#dm4" transform="matrix(0.3443 -0.2655 0 0.97 1494.3 669.4)"/><use href="#dm4" transform="matrix(0.3443 -0.2655 0 0.97 1494.3 725.6)"/><use href="#dm4" transform="matrix(0.3443 -0.2655 0 0.97 1494.3 781.8)"/><use href="#dm4" transform="matrix(0.3443 -0.2655 0 0.97 1494.3 838.0)"/><use href="#dm4" transform="matrix(0.3443 -0.2655 0 0.97 1494.3 894.2)"/><use href="#dm4" transform="matrix(0.3443 -0.2655 0 0.97 1494.3 950.4)"/><use href="#dm4" transform="matrix(0.3443 -0.2655 0 0.97 1517.0 483.3)"/><use href="#dm4" transform="matrix(0.3443 -0.2655 0 0.97 1517.0 539.5)"/><use href="#dm4" transform="matrix(0.3443 -0.2655 0 0.97 1517.0 595.7)"/><use href="#dm4" transform="matrix(0.3443 -0.2655 0 0.97 1517.0 651.9)"/><use href="#dm4" transform="matrix(0.3443 -0.2655 0 0.97 1517.0 708.1)"/><use href="#dm4" transform="matrix(0.3443 -0.2655 0 0.97 1517.0 764.3)"/><use href="#dm4" transform="matrix(0.3443 -0.2655 0 0.97 1517.0 820.5)"/><use href="#dm4" transform="matrix(0.3443 -0.2655 0 0.97 1517.0 876.7)"/><use href="#dm4" transform="matrix(0.3443 -0.2655 0 0.97 1517.0 932.9)"/><use href="#dm4" transform="matrix(0.3443 -0.2655 0 0.97 1539.7 465.8)"/><use href="#dm4" transform="matrix(0.3443 -0.2655 0 0.97 1539.7 522.0)"/><use href="#dm4" transform="matrix(0.3443 -0.2655 0 0.97 1539.7 578.2)"/><use href="#dm4" transform="matrix(0.3443 -0.2655 0 0.97 1539.7 634.4)"/><use href="#dm4" transform="matrix(0.3443 -0.2655 0 0.97 1539.7 690.6)"/><use href="#dm4" transform="matrix(0.3443 -0.2655 0 0.97 1539.7 746.8)"/><use href="#dm4" transform="matrix(0.3443 -0.2655 0 0.97 1539.7 803.0)"/><use href="#dm4" transform="matrix(0.3443 -0.2655 0 0.97 1539.7 859.2)"/><use href="#dm4" transform="matrix(0.3443 -0.2655 0 0.97 1539.7 915.4)"/><use href="#dm4" transform="matrix(0.3443 -0.2655 0 0.97 1562.4 448.3)"/><use href="#dm4" transform="matrix(0.3443 -0.2655 0 0.97 1562.4 504.5)"/><use href="#dm4" transform="matrix(0.3443 -0.2655 0 0.97 1562.4 560.7)"/><use href="#dm4" transform="matrix(0.3443 -0.2655 0 0.97 1562.4 616.9)"/><use href="#dm4" transform="matrix(0.3443 -0.2655 0 0.97 1562.4 673.1)"/><use href="#dm4" transform="matrix(0.3443 -0.2655 0 0.97 1562.4 729.3)"/><use href="#dm4" transform="matrix(0.3443 -0.2655 0 0.97 1562.4 785.5)"/><use href="#dm4" transform="matrix(0.3443 -0.2655 0 0.97 1562.4 841.7)"/><use href="#dm4" transform="matrix(0.3443 -0.2655 0 0.97 1562.4 897.9)"/><line x1="699.4" y1="402.2" x2="698.8" y2="930" stroke="#1c1c1c" stroke-width="1.6"/><line x1="833.9" y1="493.5" x2="834" y2="1022.8" stroke="#1c1c1c" stroke-width="1.6"/><line x1="1147.1" y1="531" x2="1147.2" y2="1058" stroke="#1c1c1c" stroke-width="1.6"/><line x1="1456.3" y1="490.4" x2="1456" y2="1018" stroke="#1c1c1c" stroke-width="1.6"/><line x1="1577.5" y1="396.6" x2="1578" y2="924.8" stroke="#1c1c1c" stroke-width="1.6"/><polyline points="698.8,930.0 822.0,836.0 1130.0,796.0 1442.0,832.0 1578.0,924.8" fill="none" stroke="#3a8fe0" stroke-opacity="0.6" stroke-width="1.1"/><polygon points="1129.4,267.2 1443.5,303.8 1577.5,396.6 1456.3,490.4 1147.1,531.0 833.9,493.5 699.4,402.2 822.5,308.2" fill="none" stroke="#2a8de8" stroke-width="1.4" stroke-linejoin="round"/><polyline points="698.8,930.0 834.0,1022.8 1147.2,1058.0 1456.0,1018.0 1578.0,924.8" fill="none" stroke="#1e88e5" stroke-width="1.8" stroke-linejoin="round"/><path d="M1299.2 1034.3L1327.2 1055.8L1317.4 1060.9L1322.5 1080.1L1306.5 1085.9L1299.6 1067.4L1286.9 1069.6Z" fill="#fff" stroke="#2c5f9e" stroke-width="1.3" stroke-linejoin="round"/><path d="M1299.6 1040.5L1320.3 1055.8L1311.2 1060.1L1316.3 1076.9L1309 1079.4L1303.6 1062.3L1293.1 1063.8Z" fill="#0896d8"/></svg>
<div class="b" style="left:1727.0px;top:320.3px;width:665.5px;height:523.7px;background:#f2f2f2;border-top:1px solid #d6d6d6;border-left:1.5px solid #cbcbcb;border-right:2px solid #c8c8c8;border-bottom:2px solid #c8c8c8;"></div>
<div class="b" style="left:1727.0px;top:359.0px;width:665.0px;height:1.6px;background:#c9c9c9;"></div>
<div class="b" style="left:1727.0px;top:783.0px;width:665.0px;height:1.6px;background:#c9c9c9;"></div>
<svg class="b" style="left:1746.9px;top:333.1px;" width="15" height="15" viewBox="0 0 15 15"><circle cx="7.5" cy="7.5" r="7.5" fill="#222"/><rect x="3" y="6.1" width="9" height="2.8" fill="#f2f2f2"/></svg>
<div class="t" style="left:1769.9px;top:331.4px;font-size:18.22px;line-height:18.22px;color:#444;-webkit-text-stroke:0.3px #444;transform:scaleX(0.9381);">EDIT FEATURE</div>
<svg class="b" style="left:2368.0px;top:336.0px;" width="16.5" height="10" viewBox="0 0 16.5 10"><path d="M0 0V10L8.2 5ZM8.2 0V10L16.5 5Z" fill="#222"/></svg>
<div class="b" style="left:1743.2px;top:371.5px;width:597.6px;height:185.5px;background:#fff;border:1.8px solid #c8c8c8;"></div>
<div class="b" style="left:1744.6px;top:414.3px;width:592.6px;height:44.4px;background:#a9cefc;"></div>
<div class="t" style="left:1753.7px;top:384.7px;font-size:18.08px;line-height:18.08px;color:#222;-webkit-text-stroke:0.3px #222;transform:scaleX(1.0197);">15 Edges</div>
<div class="t" style="left:1753.7px;top:427.8px;font-size:18.08px;line-height:18.08px;color:#222;-webkit-text-stroke:0.3px #222;transform:scaleX(0.9981);">1 Edge</div>
<svg class="b" style="left:1976.4px;top:379.4px;" width="27" height="27" viewBox="0 0 27 27"><g opacity="1"><path d="M0 3H12L27 18V27H0Z" fill="#f0f0f0"/><path d="M0 1H10" stroke="#444" stroke-width="1.6"/><path d="M26.2 19V27" stroke="#444" stroke-width="1.6"/><path d="M12.5 1L27 15.5" stroke="#0a84dd" stroke-width="2"/></g></svg>
<div class="b" style="left:2003.9px;top:373.7px;width:103.7px;height:38.3px;background:#fff;border:1.8px solid #c8c8c8;"></div>
<div class="t" style="left:2009.3px;top:383.9px;font-size:18.08px;line-height:18.08px;color:#222;-webkit-text-stroke:0.3px #222;transform:scaleX(1.1069);">0.2 mm</div>
<svg class="b" style="left:2159.7px;top:379.4px;" width="27" height="27" viewBox="0 0 27 27"><g opacity="0.45"><path d="M0 3H12L27 18V27H0Z" fill="#f0f0f0"/><path d="M0 1H10" stroke="#444" stroke-width="1.6"/><path d="M26.2 19V27" stroke="#444" stroke-width="1.6"/><path d="M12.5 1L27 15.5" stroke="#0a84dd" stroke-width="2"/></g></svg>
<div class="b" style="left:2186.9px;top:373.7px;width:104.0px;height:38.3px;background:#fff;border:1.8px solid #c8c8c8;"></div>
<div class="t" style="left:2192.6px;top:383.9px;font-size:18.08px;line-height:18.08px;color:#999;-webkit-text-stroke:0.3px #999;transform:scaleX(1.1069);">0.2 mm</div>
<svg class="b" style="left:1976.4px;top:422.4px;" width="27" height="27" viewBox="0 0 27 27"><g opacity="1"><path d="M0 3H12L27 18V27H0Z" fill="#f0f0f0"/><path d="M0 1H10" stroke="#444" stroke-width="1.6"/><path d="M26.2 19V27" stroke="#444" stroke-width="1.6"/><path d="M12.5 1L27 15.5" stroke="#0a84dd" stroke-width="2"/></g></svg>
<div class="b" style="left:2003.9px;top:417.7px;width:103.7px;height:38.2px;background:#fff;border:1.8px solid #c8c8c8;"></div>
<div class="t" style="left:2009.3px;top:427.3px;font-size:18.08px;line-height:18.08px;color:#222;-webkit-text-stroke:0.3px #222;transform:scaleX(1.1069);">0.2 mm</div>
<svg class="b" style="left:2159.7px;top:422.4px;" width="27" height="27" viewBox="0 0 27 27"><g opacity="0.45"><path d="M0 3H12L27 18V27H0Z" fill="#dfeaf8"/><path d="M0 1H10" stroke="#444" stroke-width="1.6"/><path d="M26.2 19V27" stroke="#444" stroke-width="1.6"/><path d="M12.5 1L27 15.5" stroke="#0a84dd" stroke-width="2"/></g></svg>
<div class="b" style="left:2186.9px;top:417.7px;width:104.0px;height:38.2px;background:#fff;border:1.8px solid #c8c8c8;"></div>
<div class="t" style="left:2192.6px;top:427.3px;font-size:18.08px;line-height:18.08px;color:#999;-webkit-text-stroke:0.3px #999;transform:scaleX(1.1069);">0.2 mm</div>
<svg class="b" style="left:1759.7px;top:523.0px;" width="17" height="17" viewBox="0 0 17 17"><path d="M8.5 0V17M0 8.5H17" stroke="#333" stroke-width="2.6"/></svg>
<svg class="b" style="left:1804.6px;top:524.7px;" width="14.4" height="14.4" viewBox="0 0 14.4 14.4"><path d="M0.9 0.9L13.5 13.5M13.5 0.9L0.9 13.5" stroke="#333" stroke-width="2.6"/></svg>
<div class="t" style="left:1749.2px;top:581.1px;font-size:18.35px;line-height:18.35px;color:#222;-webkit-text-stroke:0.3px #222;transform:scaleX(1.0241);">Type</div>
<div class="b" style="left:1966.2px;top:567.7px;width:372.3px;height:44.0px;background:#fff;border:1.8px solid #cacaca;"></div>
<svg class="b" style="left:1971.6px;top:575.9px;" width="27" height="27" viewBox="0 0 27 27"><g opacity="1"><path d="M0 3H12L27 18V27H0Z" fill="#f4f4f4"/><path d="M0 1H10" stroke="#444" stroke-width="1.6"/><path d="M26.2 19V27" stroke="#444" stroke-width="1.6"/><path d="M12.5 1L27 15.5" stroke="#0a84dd" stroke-width="2"/></g></svg>
<div class="t" style="left:2005.9px;top:581.1px;font-size:18.35px;line-height:18.35px;color:#222;-webkit-text-stroke:0.3px #222;transform:scaleX(1.0394);">Equal Distance</div>
<svg class="b" style="left:2320.0px;top:586.2px;" width="10" height="7.0" viewBox="0 0 10 7.0"><path d="M0 0H10L5.0 7.0Z" fill="#222"/></svg>
<div class="t" style="left:1749.2px;top:631.5px;font-size:18.35px;line-height:18.35px;color:#222;-webkit-text-stroke:0.3px #222;transform:scaleX(1.0479);">Edges/Faces/Features</div>
<div class="b" style="left:1965.9px;top:617.3px;width:98.3px;height:44.8px;background:#0696d7;"></div>
<svg class="b" style="left:1977.8px;top:627.8px;" width="17" height="25" viewBox="0 0 17 25"><path d="M1 1V19.5L5.3 15.8L9 24L12.8 22.3L9.2 14.3H15Z" fill="#e8e8e8" stroke="#333" stroke-width="1.5" stroke-linejoin="round"/></svg>
<div class="t" style="left:2002.2px;top:631.0px;font-size:18.35px;line-height:18.35px;color:#fff;-webkit-text-stroke:0.3px #fff;transform:scaleX(0.9764);">Select</div>
<div class="t" style="left:1749.2px;top:680.6px;font-size:18.35px;line-height:18.35px;color:#222;-webkit-text-stroke:0.3px #222;transform:scaleX(1.0742);">Tangent Chain</div>
<svg class="b" style="left:1974.1px;top:678.2px;" width="22" height="22" viewBox="0 0 22 22"><defs><linearGradient id="ckg" x1="0" y1="0" x2="0" y2="1"><stop offset="0" stop-color="#f4f4f4"/><stop offset="1" stop-color="#b4b4b4"/></linearGradient></defs><rect x="0.9" y="0.9" width="20" height="20" rx="4" fill="url(#ckg)" stroke="#222" stroke-width="1.6"/><path d="M4.5 11L9 16.5L17.5 4" fill="none" stroke="#111" stroke-width="2.2"/></svg>
<div class="b" style="left:1730.0px;top:723.3px;width:639.7px;height:1.6px;background:#c9c9c9;"></div>
<div class="t" style="left:1749.2px;top:747.7px;font-size:18.35px;line-height:18.35px;color:#222;-webkit-text-stroke:0.3px #222;transform:scaleX(1.0636);">Corner Type</div>
<div class="b" style="left:1966.2px;top:734.6px;width:372.3px;height:43.9px;background:#fff;border:1.8px solid #cacaca;"></div>
<svg class="b" style="left:1971.6px;top:743.2px;" width="26" height="27" viewBox="0 0 26 27"><path d="M1.1 0H24.4L12.6 6.3Z" fill="#f0f0f0"/><path d="M0.2 2L12.2 8.7L8.4 13.3L0.2 9.6Z" fill="#8ccbfb" stroke="#5a9fd6" stroke-width="0.7"/><path d="M25.1 2V9.6L16.4 13.6L13.1 8.9Z" fill="#4a9ad4" stroke="#2f7fc0" stroke-width="0.7"/><path d="M12.2 9.6L15.7 13.3H9.1Z" fill="#8dd0ff"/><path d="M8.8 14H16.2V26.5H8.8Z" fill="#6ab0e6" stroke="#4c96d2" stroke-width="0.7"/><path d="M0.4 12.9L6.2 15.8V26.5H0.4Z" fill="#d8d8d8"/><path d="M24.9 12.9V26.5H18.6V16Z" fill="#bcbcbc"/></svg>
<div class="t" style="left:2005.9px;top:747.7px;font-size:18.35px;line-height:18.35px;color:#222;-webkit-text-stroke:0.3px #222;transform:scaleX(1.0454);">Chamfer</div>
<svg class="b" style="left:2320.0px;top:752.8px;" width="10" height="7.0" viewBox="0 0 10 7.0"><path d="M0 0H10L5.0 7.0Z" fill="#222"/></svg>
<svg class="b" style="left:1751.2px;top:804.5px;" width="21" height="21" viewBox="0 0 21 21"><circle cx="10.4" cy="10.4" r="10.4" fill="#000"/><circle cx="10.4" cy="5.6" r="2" fill="#fff"/><path d="M7.5 8.8H11.9V15H13.6V16.8H7.2V15H8.9V10.6H7.5Z" fill="#fff"/></svg>
<div class="b" style="left:2143.9px;top:798.7px;width:98.8px;height:30.6px;background:#e6e6e6;border:1.5px solid #b9b9b9;"></div>
<div class="t" style="left:2179.8px;top:805.8px;font-size:18.35px;line-height:18.35px;color:#333;-webkit-text-stroke:0.3px #333;transform:scaleX(1.0030);">OK</div>
<div class="b" style="left:2273.6px;top:798.7px;width:99.2px;height:30.6px;background:#e6e6e6;border:1.5px solid #b9b9b9;"></div>
<div class="t" style="left:2292.0px;top:805.8px;font-size:18.35px;line-height:18.35px;color:#333;-webkit-text-stroke:0.3px #333;transform:scaleX(1.0889);">Cancel</div>
<svg class="b" style="left:0;top:0" width="2400" height="400" viewBox="0 0 2400 400"><defs><radialGradient id="vsh" cx="0.5" cy="0.5" r="0.5"><stop offset="0" stop-color="#000" stop-opacity="0.34"/><stop offset="0.55" stop-color="#000" stop-opacity="0.16"/><stop offset="1" stop-color="#000" stop-opacity="0"/></radialGradient><linearGradient id="vfg" x1="0" y1="0" x2="0" y2="1"><stop offset="0" stop-color="#f1f1f1"/><stop offset="1" stop-color="#e6e6e6"/></linearGradient></defs><ellipse cx="2309" cy="279" rx="62" ry="24" fill="url(#vsh)"/><path d="M2274.9 193.9L2341.5 192.6L2348 206.3H2270.8Z" fill="#efefef" stroke="#b4b4b4" stroke-width="1" stroke-dasharray="9 4"/><path d="M2270.8 206.3H2348L2345.6 277H2272.9Z" fill="url(#vfg)" stroke="#b8b8b8" stroke-width="1" stroke-dasharray="12 5"/><rect x="2286.6" y="221.7" width="46.7" height="42.5" fill="#dfe1e5"/><path d="M2302 197.5C2306 199.5 2312 199.5 2315 197.5M2307 202.5H2314" stroke="#b0b0b0" stroke-width="2" fill="none"/><path d="M2276.3 184.3V193.9" stroke="#5c5cf0" stroke-width="3.2"/></svg>
<div class="t" style="left:2287.2px;top:234.2px;font-size:19.26px;line-height:19.26px;color:#8b8f97;font-weight:bold;transform:scaleX(0.7747);filter:blur(0.4px);">RIGHT</div>
<div class="t" style="left:2270.1px;top:161.7px;font-size:23.20px;line-height:23.20px;color:#8484f7;font-weight:bold;transform:scaleX(0.7774);filter:blur(0.5px);">Z</div>
<div class="t" style="left:2351.4px;top:241.1px;font-size:21.37px;line-height:21.37px;color:#88f08e;font-weight:bold;transform:scaleX(0.7037);filter:blur(0.5px);">Y</div>
<div class="t" style="left:2266.0px;top:278.0px;font-size:23.20px;line-height:23.20px;color:#f28c8c;font-weight:bold;transform:scaleX(0.6224);filter:blur(0.5px);">X</div>
<div class="b" style="left:7.2px;top:1108.3px;width:498.8px;height:40.7px;background:#f2f2f2;border-top:1px solid #dadada;border-left:1.3px solid #cfcfcf;border-right:2px solid #c8c8c8;border-bottom:2px solid #c8c8c8;"></div>
<div class="t" style="left:49.1px;top:1119.3px;font-size:18.35px;line-height:18.35px;color:#444;-webkit-text-stroke:0.3px #444;transform:scaleX(0.9509);">COMMENTS</div>
<svg class="b" style="left:472.3px;top:1122.2px;" width="14" height="14" viewBox="0 0 14 14"><rect width="14" height="14" rx="5.5" fill="#222"/><path d="M7 2.8V11.2M2.8 7H11.2" stroke="#f2f2f2" stroke-width="2.2"/></svg>
<div class="b" style="left:1003.4px;top:1106.6px;width:394.8px;height:39.8px;background:#f0f0f0;"></div>
<div class="b" style="left:1658.4px;top:1111.5px;width:191.2px;height:36.4px;background:#f0f0f0;"></div>
<div class="b" style="left:1675.8px;top:1113.0px;width:1.4px;height:33.5px;background:#c8c8c8;"></div>
<svg class="b" style="left:1664.0px;top:1116.0px;" width="6" height="30" viewBox="0 0 6 30"><path d="M1 0L4 3L1 6L4 9L1 12L4 15L1 18L4 21L1 24L4 27" stroke="#d4d4d4" stroke-width="1" fill="none"/></svg>
<div class="b" style="left:1682.1px;top:1113.4px;width:127.6px;height:32.3px;background:#fff;border:1.5px solid #c4c4c4;"></div>
<div class="t" style="left:1710.6px;top:1120.9px;font-size:18.08px;line-height:18.08px;color:#222;-webkit-text-stroke:0.3px #222;transform:scaleX(1.1184);">0.2 mm</div>
<svg class="b" style="left:1827.6px;top:1117.3px;" width="6" height="23" viewBox="0 0 6 23"><circle cx="3" cy="3" r="2.6" fill="#8a8a8a"/><circle cx="3" cy="11.3" r="2.6" fill="#8a8a8a"/><circle cx="3" cy="19.8" r="2.6" fill="#8a8a8a"/></svg>
<div class="t" style="left:2288.2px;top:1125.7px;font-size:19.12px;line-height:19.12px;color:#222;font-weight:bold;transform:scaleX(0.9996);">16 Edges</div>
<div class="b" style="left:0.0px;top:1156.7px;width:2400.0px;height:81.3px;background:linear-gradient(#c8c8c8 0px,#dadada 3px,#f1f1f1 5.5px,#f1f1f1 100%);"></div>
<div class="b" style="left:0.0px;top:1190.0px;width:2400.0px;height:48.0px;background:linear-gradient(rgba(0,0,0,0),rgba(0,0,0,0.035) 40%,rgba(0,0,0,0.1));-webkit-mask-image:linear-gradient(to right,transparent 0,#000 14%,#000 82%,transparent 99%);mask-image:linear-gradient(to right,transparent 0,#000 14%,#000 82%,transparent 99%);"></div>
<div class="b" style="left:0.0px;top:1158.8px;width:225.0px;height:3.2px;background:#c6c6c6;"></div>
<div class="b" style="left:2325.0px;top:1158.6px;width:75.0px;height:3.0px;background:#c8c8c8;"></div>
<svg class="b" style="left:0.0px;top:1220.0px;" width="12" height="18" viewBox="0 0 12 18"><path d="M0 0V18H12C4 15 0.5 9 0 0Z" fill="#3b5a8f"/></svg>
<svg class="b" style="left:2389.0px;top:1219.0px;" width="11" height="19" viewBox="0 0 11 19"><path d="M11 0V19H0C7 16 10.5 9 11 0Z" fill="#47669a"/></svg>
<svg class="b" style="left:18.1px;top:1190.8px;" width="19" height="20.5" viewBox="0 0 19 20.5"><rect x="0" y="0" width="3.2" height="20.5" fill="#5e5e5e"/><path d="M19 0V20.5L3.2 10.25Z" fill="#5e5e5e"/></svg>
<svg class="b" style="left:58.7px;top:1190.8px;" width="21.5" height="20.5" viewBox="0 0 21.5 20.5"><path d="M16 0V20.5L0 10.25Z" fill="#5e5e5e"/><rect x="18" y="5.7" width="3.3" height="9.1" fill="#5e5e5e"/></svg>
<svg class="b" style="left:101.3px;top:1188.1px;" width="20.6" height="25.1" viewBox="0 0 20.6 25.1"><path d="M0 0L20.6 12.5L0 25.1Z" fill="#5e5e5e"/></svg>
<svg class="b" style="left:141.3px;top:1190.8px;" width="21.5" height="20.5" viewBox="0 0 21.5 20.5"><rect x="0" y="5.7" width="3.3" height="9.1" fill="#5e5e5e"/><path d="M5.5 0V20.5L21.5 10.25Z" fill="#5e5e5e"/></svg>
<svg class="b" style="left:184.8px;top:1190.8px;" width="19.2" height="20.5" viewBox="0 0 19.2 20.5"><path d="M0 0V20.5L15.8 10.25Z" fill="#5e5e5e"/><rect x="16" y="0" width="3.2" height="20.5" fill="#5e5e5e"/></svg>
<div class="b" style="left:256.8px;top:1226.9px;width:960.9px;height:2.6px;background:#bebebe;"></div>
<div class="b" style="left:256.8px;top:1218.5px;width:2.6px;height:11.0px;background:#bebebe;"></div>
<div class="b" style="left:295.2px;top:1218.5px;width:2.6px;height:11.0px;background:#bebebe;"></div>
<div class="b" style="left:335.2px;top:1218.5px;width:2.6px;height:11.0px;background:#bebebe;"></div>
<div class="b" style="left:375.2px;top:1218.5px;width:2.6px;height:11.0px;background:#bebebe;"></div>
<div class="b" style="left:415.2px;top:1218.5px;width:2.6px;height:11.0px;background:#bebebe;"></div>
<div class="b" style="left:455.2px;top:1218.5px;width:2.6px;height:11.0px;background:#bebebe;"></div>
<div class="b" style="left:495.2px;top:1218.5px;width:2.6px;height:11.0px;background:#bebebe;"></div>
<div class="b" style="left:535.2px;top:1218.5px;width:2.6px;height:11.0px;background:#bebebe;"></div>
<div class="b" style="left:575.2px;top:1218.5px;width:2.6px;height:11.0px;background:#bebebe;"></div>
<div class="b" style="left:615.2px;top:1218.5px;width:2.6px;height:11.0px;background:#bebebe;"></div>
<div class="b" style="left:655.2px;top:1218.5px;width:2.6px;height:11.0px;background:#bebebe;"></div>
<div class="b" style="left:695.2px;top:1218.5px;width:2.6px;height:11.0px;background:#bebebe;"></div>
<div class="b" style="left:735.2px;top:1218.5px;width:2.6px;height:11.0px;background:#bebebe;"></div>
<div class="b" style="left:775.2px;top:1218.5px;width:2.6px;height:11.0px;background:#bebebe;"></div>
<div class="b" style="left:815.2px;top:1218.5px;width:2.6px;height:11.0px;background:#bebebe;"></div>
<div class="b" style="left:855.2px;top:1218.5px;width:2.6px;height:11.0px;background:#bebebe;"></div>
<div class="b" style="left:895.2px;top:1218.5px;width:2.6px;height:11.0px;background:#bebebe;"></div>
<div class="b" style="left:935.2px;top:1218.5px;width:2.6px;height:11.0px;background:#bebebe;"></div>
<div class="b" style="left:975.2px;top:1218.5px;width:2.6px;height:11.0px;background:#bebebe;"></div>
<div class="b" style="left:1015.2px;top:1218.5px;width:2.6px;height:11.0px;background:#bebebe;"></div>
<div class="b" style="left:1055.2px;top:1218.5px;width:2.6px;height:11.0px;background:#bebebe;"></div>
<div class="b" style="left:1095.2px;top:1218.5px;width:2.6px;height:11.0px;background:#bebebe;"></div>
<div class="b" style="left:1135.2px;top:1218.5px;width:2.6px;height:11.0px;background:#bebebe;"></div>
<div class="b" style="left:1175.2px;top:1218.5px;width:2.6px;height:11.0px;background:#bebebe;"></div>
<div class="b" style="left:1215.2px;top:1218.5px;width:2.6px;height:11.0px;background:#bebebe;"></div>
<svg class="b" style="left:1226.2px;top:1175.6px;" width="21" height="54" viewBox="0 0 21 54"><path d="M0.5 0.4H20.5V6.8L12.5 14.8V54H8.5V14.8L0.5 6.8Z" fill="#555" stroke="#f8f8f8" stroke-width="1" paint-order="stroke"/></svg>
<svg class="b" style="left:2351.4px;top:1188.0px;" width="25.6" height="25.6" viewBox="0 0 25.6 25.6"><g transform="translate(12.8 12.8)"><rect x="-2.75" y="-12.80" width="5.50" height="6.40" transform="rotate(0.0)" fill="#7c7c7c"/><rect x="-2.75" y="-12.80" width="5.50" height="6.40" transform="rotate(45.0)" fill="#7c7c7c"/><rect x="-2.75" y="-12.80" width="5.50" height="6.40" transform="rotate(90.0)" fill="#7c7c7c"/><rect x="-2.75" y="-12.80" width="5.50" height="6.40" transform="rotate(135.0)" fill="#7c7c7c"/><rect x="-2.75" y="-12.80" width="5.50" height="6.40" transform="rotate(180.0)" fill="#7c7c7c"/><rect x="-2.75" y="-12.80" width="5.50" height="6.40" transform="rotate(225.0)" fill="#7c7c7c"/><rect x="-2.75" y="-12.80" width="5.50" height="6.40" transform="rotate(270.0)" fill="#7c7c7c"/><rect x="-2.75" y="-12.80" width="5.50" height="6.40" transform="rotate(315.0)" fill="#7c7c7c"/><circle r="8.96" fill="#7c7c7c"/><circle r="4.35" fill="#eeeeee"/></g></svg>
<svg class="b" style="left:0;top:0" width="2400" height="1238" viewBox="0 0 2400 1238"><g transform="translate(256.5 1199.8)"><path d="M-9.5 -11.6H7.5M-12 -8.8V7.4M10 -8.8V0M-9.5 10.2H0.5" stroke="#8a8a8a" stroke-width="1.3" fill="none"/><path d="M-4.5 -6H2.2M-6.3 -3.8V2.4M4.2 -3.6A10.4 10.4 0 0 1 -4 4.4" stroke="#777" stroke-width="1.2" fill="none"/><rect x="-13.30" y="-12.90" width="2.6" height="2.6" fill="#1e8fff"/><rect x="8.70" y="-12.90" width="2.6" height="2.6" fill="#1e8fff"/><rect x="-13.30" y="8.90" width="2.6" height="2.6" fill="#1e8fff"/><rect x="-7.50" y="-7.20" width="2.4" height="2.4" fill="#1e8fff"/><rect x="3.00" y="-7.20" width="2.4" height="2.4" fill="#1e8fff"/><rect x="-7.50" y="3.20" width="2.4" height="2.4" fill="#1e8fff"/><path d="M2 7.7L8 2.4L10.7 5.2L5 10.7Z" fill="#f0b545"/><circle cx="10.2" cy="3" r="2.2" fill="#ee2a2a"/><path d="M2 7.7L5 10.7L0.6 12.4Z" fill="#555"/></g><g transform="translate(296.5 1199.8)"><path d="M-12.3 10.2H3V13H-12.3Z" fill="#b4b4b4"/><path d="M3 10.2L7.5 5.7V8.2L3 13Z" fill="#cacaca"/><path d="M-12.3 -8.3L-7.5 -13.3H7.5L3 -8.3Z" fill="#8dcbfb"/><path d="M3 -8.3L7.5 -13.3V4.2L3 9.2Z" fill="#4793d1"/><path d="M-12.3 -8.3H3V9.2H-12.3Z" fill="#6bb0e6"/><path d="M10.5 8.2V-10" stroke="#222" stroke-width="1.4"/><path d="M8.8 -9.4L10.5 -12.4L12.2 -9.4Z" fill="#222"/></g><g transform="translate(336.5 1199.8)"><circle cx="7.60" cy="0.00" r="2.35" fill="#4c9edc"/><circle cx="5.37" cy="5.37" r="1.95" fill="#4c9edc"/><circle cx="0.00" cy="7.60" r="2.35" fill="#4c9edc"/><circle cx="-5.37" cy="5.37" r="1.95" fill="#4c9edc"/><circle cx="-7.60" cy="0.00" r="2.35" fill="#4c9edc"/><circle cx="-5.37" cy="-5.37" r="1.95" fill="#4c9edc"/><circle cx="-0.00" cy="-7.60" r="2.35" fill="#4c9edc"/><circle cx="5.37" cy="-5.37" r="1.95" fill="#4c9edc"/><circle cx="11.78" cy="-4.17" r="1.6" fill="#4c9edc"/><circle cx="11.78" cy="4.17" r="1.6" fill="#4c9edc"/><circle cx="10.47" cy="10.47" r="1.15" fill="#4c9edc"/><circle cx="4.17" cy="11.78" r="1.6" fill="#4c9edc"/><circle cx="-4.17" cy="11.78" r="1.6" fill="#4c9edc"/><circle cx="-10.47" cy="10.47" r="1.15" fill="#4c9edc"/><circle cx="-11.78" cy="4.17" r="1.6" fill="#4c9edc"/><circle cx="-11.78" cy="-4.17" r="1.6" fill="#4c9edc"/><circle cx="-10.47" cy="-10.47" r="1.15" fill="#4c9edc"/><circle cx="-4.17" cy="-11.78" r="1.6" fill="#4c9edc"/><circle cx="4.17" cy="-11.78" r="1.6" fill="#4c9edc"/><circle cx="10.47" cy="-10.47" r="1.15" fill="#4c9edc"/><circle r="3.1" fill="#fff" stroke="#666" stroke-width="0.9"/></g><g transform="translate(376.5 1199.8)"><circle cx="7.60" cy="0.00" r="2.35" fill="#4c9edc"/><circle cx="5.37" cy="5.37" r="1.95" fill="#4c9edc"/><circle cx="0.00" cy="7.60" r="2.35" fill="#4c9edc"/><circle cx="-5.37" cy="5.37" r="1.95" fill="#4c9edc"/><circle cx="-7.60" cy="0.00" r="2.35" fill="#4c9edc"/><circle cx="-5.37" cy="-5.37" r="1.95" fill="#4c9edc"/><circle cx="-0.00" cy="-7.60" r="2.35" fill="#4c9edc"/><circle cx="5.37" cy="-5.37" r="1.95" fill="#4c9edc"/><circle cx="11.78" cy="-4.17" r="1.6" fill="#4c9edc"/><circle cx="11.78" cy="4.17" r="1.6" fill="#4c9edc"/><circle cx="10.47" cy="10.47" r="1.15" fill="#4c9edc"/><circle cx="4.17" cy="11.78" r="1.6" fill="#4c9edc"/><circle cx="-4.17" cy="11.78" r="1.6" fill="#4c9edc"/><circle cx="-10.47" cy="10.47" r="1.15" fill="#4c9edc"/><circle cx="-11.78" cy="4.17" r="1.6" fill="#4c9edc"/><circle cx="-11.78" cy="-4.17" r="1.6" fill="#4c9edc"/><circle cx="-10.47" cy="-10.47" r="1.15" fill="#4c9edc"/><circle cx="-4.17" cy="-11.78" r="1.6" fill="#4c9edc"/><circle cx="4.17" cy="-11.78" r="1.6" fill="#4c9edc"/><circle cx="10.47" cy="-10.47" r="1.15" fill="#4c9edc"/><circle r="3.1" fill="#fff" stroke="#666" stroke-width="0.9"/></g><g transform="translate(416.5 1199.8)"><circle cx="7.60" cy="0.00" r="2.35" fill="#4c9edc"/><circle cx="5.37" cy="5.37" r="1.95" fill="#4c9edc"/><circle cx="0.00" cy="7.60" r="2.35" fill="#4c9edc"/><circle cx="-5.37" cy="5.37" r="1.95" fill="#4c9edc"/><circle cx="-7.60" cy="0.00" r="2.35" fill="#4c9edc"/><circle cx="-5.37" cy="-5.37" r="1.95" fill="#4c9edc"/><circle cx="-0.00" cy="-7.60" r="2.35" fill="#4c9edc"/><circle cx="5.37" cy="-5.37" r="1.95" fill="#4c9edc"/><circle cx="11.78" cy="-4.17" r="1.6" fill="#4c9edc"/><circle cx="11.78" cy="4.17" r="1.6" fill="#4c9edc"/><circle cx="10.47" cy="10.47" r="1.15" fill="#4c9edc"/><circle cx="4.17" cy="11.78" r="1.6" fill="#4c9edc"/><circle cx="-4.17" cy="11.78" r="1.6" fill="#4c9edc"/><circle cx="-10.47" cy="10.47" r="1.15" fill="#4c9edc"/><circle cx="-11.78" cy="4.17" r="1.6" fill="#4c9edc"/><circle cx="-11.78" cy="-4.17" r="1.6" fill="#4c9edc"/><circle cx="-10.47" cy="-10.47" r="1.15" fill="#4c9edc"/><circle cx="-4.17" cy="-11.78" r="1.6" fill="#4c9edc"/><circle cx="4.17" cy="-11.78" r="1.6" fill="#4c9edc"/><circle cx="10.47" cy="-10.47" r="1.15" fill="#4c9edc"/><circle r="3.1" fill="#fff" stroke="#666" stroke-width="0.9"/></g><g transform="translate(456.5 1199.8)"><circle cx="7.60" cy="0.00" r="2.35" fill="#4c9edc"/><circle cx="5.37" cy="5.37" r="1.95" fill="#4c9edc"/><circle cx="0.00" cy="7.60" r="2.35" fill="#4c9edc"/><circle cx="-5.37" cy="5.37" r="1.95" fill="#4c9edc"/><circle cx="-7.60" cy="0.00" r="2.35" fill="#4c9edc"/><circle cx="-5.37" cy="-5.37" r="1.95" fill="#4c9edc"/><circle cx="-0.00" cy="-7.60" r="2.35" fill="#4c9edc"/><circle cx="5.37" cy="-5.37" r="1.95" fill="#4c9edc"/><circle cx="11.78" cy="-4.17" r="1.6" fill="#4c9edc"/><circle cx="11.78" cy="4.17" r="1.6" fill="#4c9edc"/><circle cx="10.47" cy="10.47" r="1.15" fill="#4c9edc"/><circle cx="4.17" cy="11.78" r="1.6" fill="#4c9edc"/><circle cx="-4.17" cy="11.78" r="1.6" fill="#4c9edc"/><circle cx="-10.47" cy="10.47" r="1.15" fill="#4c9edc"/><circle cx="-11.78" cy="4.17" r="1.6" fill="#4c9edc"/><circle cx="-11.78" cy="-4.17" r="1.6" fill="#4c9edc"/><circle cx="-10.47" cy="-10.47" r="1.15" fill="#4c9edc"/><circle cx="-4.17" cy="-11.78" r="1.6" fill="#4c9edc"/><circle cx="4.17" cy="-11.78" r="1.6" fill="#4c9edc"/><circle cx="10.47" cy="-10.47" r="1.15" fill="#4c9edc"/><circle r="3.1" fill="#fff" stroke="#666" stroke-width="0.9"/></g><g transform="translate(496.5 1199.8)"><circle cx="7.60" cy="0.00" r="2.35" fill="#4c9edc"/><circle cx="5.37" cy="5.37" r="1.95" fill="#4c9edc"/><circle cx="0.00" cy="7.60" r="2.35" fill="#4c9edc"/><circle cx="-5.37" cy="5.37" r="1.95" fill="#4c9edc"/><circle cx="-7.60" cy="0.00" r="2.35" fill="#4c9edc"/><circle cx="-5.37" cy="-5.37" r="1.95" fill="#4c9edc"/><circle cx="-0.00" cy="-7.60" r="2.35" fill="#4c9edc"/><circle cx="5.37" cy="-5.37" r="1.95" fill="#4c9edc"/><circle cx="11.78" cy="-4.17" r="1.6" fill="#4c9edc"/><circle cx="11.78" cy="4.17" r="1.6" fill="#4c9edc"/><circle cx="10.47" cy="10.47" r="1.15" fill="#4c9edc"/><circle cx="4.17" cy="11.78" r="1.6" fill="#4c9edc"/><circle cx="-4.17" cy="11.78" r="1.6" fill="#4c9edc"/><circle cx="-10.47" cy="10.47" r="1.15" fill="#4c9edc"/><circle cx="-11.78" cy="4.17" r="1.6" fill="#4c9edc"/><circle cx="-11.78" cy="-4.17" r="1.6" fill="#4c9edc"/><circle cx="-10.47" cy="-10.47" r="1.15" fill="#4c9edc"/><circle cx="-4.17" cy="-11.78" r="1.6" fill="#4c9edc"/><circle cx="4.17" cy="-11.78" r="1.6" fill="#4c9edc"/><circle cx="10.47" cy="-10.47" r="1.15" fill="#4c9edc"/><circle r="3.1" fill="#fff" stroke="#666" stroke-width="0.9"/></g><g transform="translate(536.5 1199.8)"><circle cx="7.60" cy="0.00" r="2.35" fill="#4c9edc"/><circle cx="5.37" cy="5.37" r="1.95" fill="#4c9edc"/><circle cx="0.00" cy="7.60" r="2.35" fill="#4c9edc"/><circle cx="-5.37" cy="5.37" r="1.95" fill="#4c9edc"/><circle cx="-7.60" cy="0.00" r="2.35" fill="#4c9edc"/><circle cx="-5.37" cy="-5.37" r="1.95" fill="#4c9edc"/><circle cx="-0.00" cy="-7.60" r="2.35" fill="#4c9edc"/><circle cx="5.37" cy="-5.37" r="1.95" fill="#4c9edc"/><circle cx="11.78" cy="-4.17" r="1.6" fill="#4c9edc"/><circle cx="11.78" cy="4.17" r="1.6" fill="#4c9edc"/><circle cx="10.47" cy="10.47" r="1.15" fill="#4c9edc"/><circle cx="4.17" cy="11.78" r="1.6" fill="#4c9edc"/><circle cx="-4.17" cy="11.78" r="1.6" fill="#4c9edc"/><circle cx="-10.47" cy="10.47" r="1.15" fill="#4c9edc"/><circle cx="-11.78" cy="4.17" r="1.6" fill="#4c9edc"/><circle cx="-11.78" cy="-4.17" r="1.6" fill="#4c9edc"/><circle cx="-10.47" cy="-10.47" r="1.15" fill="#4c9edc"/><circle cx="-4.17" cy="-11.78" r="1.6" fill="#4c9edc"/><circle cx="4.17" cy="-11.78" r="1.6" fill="#4c9edc"/><circle cx="10.47" cy="-10.47" r="1.15" fill="#4c9edc"/><circle r="3.1" fill="#fff" stroke="#666" stroke-width="0.9"/></g><g transform="translate(576.5 1199.8)"><circle cx="7.60" cy="0.00" r="2.35" fill="#4c9edc"/><circle cx="5.37" cy="5.37" r="1.95" fill="#4c9edc"/><circle cx="0.00" cy="7.60" r="2.35" fill="#4c9edc"/><circle cx="-5.37" cy="5.37" r="1.95" fill="#4c9edc"/><circle cx="-7.60" cy="0.00" r="2.35" fill="#4c9edc"/><circle cx="-5.37" cy="-5.37" r="1.95" fill="#4c9edc"/><circle cx="-0.00" cy="-7.60" r="2.35" fill="#4c9edc"/><circle cx="5.37" cy="-5.37" r="1.95" fill="#4c9edc"/><circle cx="11.78" cy="-4.17" r="1.6" fill="#4c9edc"/><circle cx="11.78" cy="4.17" r="1.6" fill="#4c9edc"/><circle cx="10.47" cy="10.47" r="1.15" fill="#4c9edc"/><circle cx="4.17" cy="11.78" r="1.6" fill="#4c9edc"/><circle cx="-4.17" cy="11.78" r="1.6" fill="#4c9edc"/><circle cx="-10.47" cy="10.47" r="1.15" fill="#4c9edc"/><circle cx="-11.78" cy="4.17" r="1.6" fill="#4c9edc"/><circle cx="-11.78" cy="-4.17" r="1.6" fill="#4c9edc"/><circle cx="-10.47" cy="-10.47" r="1.15" fill="#4c9edc"/><circle cx="-4.17" cy="-11.78" r="1.6" fill="#4c9edc"/><circle cx="4.17" cy="-11.78" r="1.6" fill="#4c9edc"/><circle cx="10.47" cy="-10.47" r="1.15" fill="#4c9edc"/><circle r="3.1" fill="#fff" stroke="#666" stroke-width="0.9"/></g><g transform="translate(616.5 1199.8)"><circle cx="7.60" cy="0.00" r="2.35" fill="#4c9edc"/><circle cx="5.37" cy="5.37" r="1.95" fill="#4c9edc"/><circle cx="0.00" cy="7.60" r="2.35" fill="#4c9edc"/><circle cx="-5.37" cy="5.37" r="1.95" fill="#4c9edc"/><circle cx="-7.60" cy="0.00" r="2.35" fill="#4c9edc"/><circle cx="-5.37" cy="-5.37" r="1.95" fill="#4c9edc"/><circle cx="-0.00" cy="-7.60" r="2.35" fill="#4c9edc"/><circle cx="5.37" cy="-5.37" r="1.95" fill="#4c9edc"/><circle cx="11.78" cy="-4.17" r="1.6" fill="#4c9edc"/><circle cx="11.78" cy="4.17" r="1.6" fill="#4c9edc"/><circle cx="10.47" cy="10.47" r="1.15" fill="#4c9edc"/><circle cx="4.17" cy="11.78" r="1.6" fill="#4c9edc"/><circle cx="-4.17" cy="11.78" r="1.6" fill="#4c9edc"/><circle cx="-10.47" cy="10.47" r="1.15" fill="#4c9edc"/><circle cx="-11.78" cy="4.17" r="1.6" fill="#4c9edc"/><circle cx="-11.78" cy="-4.17" r="1.6" fill="#4c9edc"/><circle cx="-10.47" cy="-10.47" r="1.15" fill="#4c9edc"/><circle cx="-4.17" cy="-11.78" r="1.6" fill="#4c9edc"/><circle cx="4.17" cy="-11.78" r="1.6" fill="#4c9edc"/><circle cx="10.47" cy="-10.47" r="1.15" fill="#4c9edc"/><circle r="3.1" fill="#fff" stroke="#666" stroke-width="0.9"/></g><g transform="translate(656.5 1199.8)"><clipPath id="spc"><circle r="13.3"/></clipPath><circle r="13.3" fill="#86c4f4"/><path d="M-14 1.5Q0 7 14 1.5V14H-14Z" fill="#5ea7e0" clip-path="url(#spc)"/></g><g transform="translate(696.5 1199.8)"><path d="M-9 0H9M0 -9V9" stroke="#333" stroke-width="2.3"/><path d="M-12.8 0L-7 -4.4V4.4ZM12.8 0L7 -4.4V4.4ZM0 -13L-4.4 -7H4.4ZM0 13L-4.4 7H4.4Z" fill="#333"/></g><g transform="translate(736.5 1199.8)"><path d="M-13.2 -1.8L-10.2 -4.8H2L-1 -1.8Z" fill="#8dcbfb"/><path d="M2 4.7L5.3 4.7V9.7L2 13Z" fill="#4793d1"/><path d="M-13.2 -1.8H2V13H-13.2Z" fill="#67ade4"/><path d="M-4 -10.3L-1 -13.3H13.3L10 -10.3Z" fill="#8dcbfb"/><path d="M10 -10.3L13.3 -13.3V1.7L10 4.7Z" fill="#4793d1"/><path d="M-4 -10.3H10V4.7H-4Z" fill="#67ade4"/></g><g transform="translate(776.5 1199.8)"><path d="M-13 -0.8L-0.5 -13.3H7L13 -7.3V12.7H-6.5L-13 6.2Z" fill="#fafafa" stroke="#444" stroke-width="1.2" stroke-linejoin="round"/><path d="M-6.5 12.2V4.7L7 -6.8H12.5V12.2Z" fill="#d2d2d2"/><path d="M-12.3 -2.3L-2 -12.3L4.3 -6.3L-6.7 4Z" fill="#55a3e0"/></g><g transform="translate(816.5 1199.8)" opacity="0.3"><path d="M-13 -0.8L-0.5 -13.3H7L13 -7.3V12.7H-6.5L-13 6.2Z" fill="#fafafa" stroke="#444" stroke-width="1.2" stroke-linejoin="round"/><path d="M-6.5 12.2V4.7L7 -6.8H12.5V12.2Z" fill="#d2d2d2"/><path d="M-12.3 -2.3L-2 -12.3L4.3 -6.3L-6.7 4Z" fill="#55a3e0"/></g><g transform="translate(856.5 1199.8)" opacity="0.3"><path d="M-9.5 -11.6H7.5M-12 -8.8V7.4M10 -8.8V0M-9.5 10.2H0.5" stroke="#8a8a8a" stroke-width="1.3" fill="none"/><path d="M-4.5 -6H2.2M-6.3 -3.8V2.4M4.2 -3.6A10.4 10.4 0 0 1 -4 4.4" stroke="#777" stroke-width="1.2" fill="none"/><rect x="-13.30" y="-12.90" width="2.6" height="2.6" fill="#1e8fff"/><rect x="8.70" y="-12.90" width="2.6" height="2.6" fill="#1e8fff"/><rect x="-13.30" y="8.90" width="2.6" height="2.6" fill="#1e8fff"/><rect x="-7.50" y="-7.20" width="2.4" height="2.4" fill="#1e8fff"/><rect x="3.00" y="-7.20" width="2.4" height="2.4" fill="#1e8fff"/><rect x="-7.50" y="3.20" width="2.4" height="2.4" fill="#1e8fff"/><path d="M2 7.7L8 2.4L10.7 5.2L5 10.7Z" fill="#f0b545"/><circle cx="10.2" cy="3" r="2.2" fill="#ee2a2a"/><path d="M2 7.7L5 10.7L0.6 12.4Z" fill="#555"/></g><g transform="translate(896.5 1199.8)" opacity="0.3"><path d="M-12.3 10.2H3V13H-12.3Z" fill="#b4b4b4"/><path d="M3 10.2L7.5 5.7V8.2L3 13Z" fill="#cacaca"/><path d="M-12.3 -8.3L-7.5 -13.3H7.5L3 -8.3Z" fill="#8dcbfb"/><path d="M3 -8.3L7.5 -13.3V4.2L3 9.2Z" fill="#4793d1"/><path d="M-12.3 -8.3H3V9.2H-12.3Z" fill="#6bb0e6"/><path d="M10.5 8.2V-10" stroke="#222" stroke-width="1.4"/><path d="M8.8 -9.4L10.5 -12.4L12.2 -9.4Z" fill="#222"/></g><g transform="translate(936.5 1199.8)" opacity="0.32"><path d="M-13.5 -8.5L-9 -13H13V8L8.5 12.8H-13.5Z" fill="#dedede" stroke="#777" stroke-width="1.3" stroke-linejoin="round"/><path d="M-13.5 -8.5H8.5V12.8M8.5 -8.5L13 -13" fill="none" stroke="#888" stroke-width="1"/><g transform="rotate(-38)" fill="none" stroke="#777" stroke-width="2"><rect x="-11" y="-3.6" width="12.5" height="7.2" rx="3.6"/><rect x="-2.5" y="-3.6" width="12.5" height="7.2" rx="3.6"/></g></g><g transform="translate(976.5 1199.8)" opacity="0.38"><path d="M-9 0H9M0 -9V9" stroke="#555" stroke-width="2.3"/><path d="M-12.8 0L-7 -4.4V4.4ZM12.8 0L7 -4.4V4.4ZM0 -13L-4.4 -7H4.4ZM0 13L-4.4 7H4.4Z" fill="#555"/></g><g transform="translate(1016.5 1199.8)" opacity="0.3"><path d="M-9.5 -11.6H7.5M-12 -8.8V7.4M10 -8.8V0M-9.5 10.2H0.5" stroke="#8a8a8a" stroke-width="1.3" fill="none"/><path d="M-4.5 -6H2.2M-6.3 -3.8V2.4M4.2 -3.6A10.4 10.4 0 0 1 -4 4.4" stroke="#777" stroke-width="1.2" fill="none"/><rect x="-13.30" y="-12.90" width="2.6" height="2.6" fill="#1e8fff"/><rect x="8.70" y="-12.90" width="2.6" height="2.6" fill="#1e8fff"/><rect x="-13.30" y="8.90" width="2.6" height="2.6" fill="#1e8fff"/><rect x="-7.50" y="-7.20" width="2.4" height="2.4" fill="#1e8fff"/><rect x="3.00" y="-7.20" width="2.4" height="2.4" fill="#1e8fff"/><rect x="-7.50" y="3.20" width="2.4" height="2.4" fill="#1e8fff"/><path d="M2 7.7L8 2.4L10.7 5.2L5 10.7Z" fill="#f0b545"/><circle cx="10.2" cy="3" r="2.2" fill="#ee2a2a"/><path d="M2 7.7L5 10.7L0.6 12.4Z" fill="#555"/></g><g transform="translate(1056.5 1199.8)" opacity="0.3"><path d="M-9.5 -11.6H7.5M-12 -8.8V7.4M10 -8.8V0M-9.5 10.2H0.5" stroke="#8a8a8a" stroke-width="1.3" fill="none"/><path d="M-4.5 -6H2.2M-6.3 -3.8V2.4M4.2 -3.6A10.4 10.4 0 0 1 -4 4.4" stroke="#777" stroke-width="1.2" fill="none"/><rect x="-13.30" y="-12.90" width="2.6" height="2.6" fill="#1e8fff"/><rect x="8.70" y="-12.90" width="2.6" height="2.6" fill="#1e8fff"/><rect x="-13.30" y="8.90" width="2.6" height="2.6" fill="#1e8fff"/><rect x="-7.50" y="-7.20" width="2.4" height="2.4" fill="#1e8fff"/><rect x="3.00" y="-7.20" width="2.4" height="2.4" fill="#1e8fff"/><rect x="-7.50" y="3.20" width="2.4" height="2.4" fill="#1e8fff"/><path d="M2 7.7L8 2.4L10.7 5.2L5 10.7Z" fill="#f0b545"/><circle cx="10.2" cy="3" r="2.2" fill="#ee2a2a"/><path d="M2 7.7L5 10.7L0.6 12.4Z" fill="#555"/></g><g transform="translate(1096.5 1199.8)" opacity="0.3"><path d="M-9.5 -11.6H7.5M-12 -8.8V7.4M10 -8.8V0M-9.5 10.2H0.5" stroke="#8a8a8a" stroke-width="1.3" fill="none"/><path d="M-4.5 -6H2.2M-6.3 -3.8V2.4M4.2 -3.6A10.4 10.4 0 0 1 -4 4.4" stroke="#777" stroke-width="1.2" fill="none"/><rect x="-13.30" y="-12.90" width="2.6" height="2.6" fill="#1e8fff"/><rect x="8.70" y="-12.90" width="2.6" height="2.6" fill="#1e8fff"/><rect x="-13.30" y="8.90" width="2.6" height="2.6" fill="#1e8fff"/><rect x="-7.50" y="-7.20" width="2.4" height="2.4" fill="#1e8fff"/><rect x="3.00" y="-7.20" width="2.4" height="2.4" fill="#1e8fff"/><rect x="-7.50" y="3.20" width="2.4" height="2.4" fill="#1e8fff"/><path d="M2 7.7L8 2.4L10.7 5.2L5 10.7Z" fill="#f0b545"/><circle cx="10.2" cy="3" r="2.2" fill="#ee2a2a"/><path d="M2 7.7L5 10.7L0.6 12.4Z" fill="#555"/></g><g transform="translate(1136.5 1199.8)" opacity="0.3"><path d="M-12.3 10.2H3V13H-12.3Z" fill="#b4b4b4"/><path d="M3 10.2L7.5 5.7V8.2L3 13Z" fill="#cacaca"/><path d="M-12.3 -8.3L-7.5 -13.3H7.5L3 -8.3Z" fill="#8dcbfb"/><path d="M3 -8.3L7.5 -13.3V4.2L3 9.2Z" fill="#4793d1"/><path d="M-12.3 -8.3H3V9.2H-12.3Z" fill="#6bb0e6"/><path d="M10.5 8.2V-10" stroke="#222" stroke-width="1.4"/><path d="M8.8 -9.4L10.5 -12.4L12.2 -9.4Z" fill="#222"/></g><g transform="translate(1176.5 1199.8)" opacity="0.3"><path d="M-9.5 -11.6H7.5M-12 -8.8V7.4M10 -8.8V0M-9.5 10.2H0.5" stroke="#8a8a8a" stroke-width="1.3" fill="none"/><path d="M-4.5 -6H2.2M-6.3 -3.8V2.4M4.2 -3.6A10.4 10.4 0 0 1 -4 4.4" stroke="#777" stroke-width="1.2" fill="none"/><rect x="-13.30" y="-12.90" width="2.6" height="2.6" fill="#1e8fff"/><rect x="8.70" y="-12.90" width="2.6" height="2.6" fill="#1e8fff"/><rect x="-13.30" y="8.90" width="2.6" height="2.6" fill="#1e8fff"/><rect x="-7.50" y="-7.20" width="2.4" height="2.4" fill="#1e8fff"/><rect x="3.00" y="-7.20" width="2.4" height="2.4" fill="#1e8fff"/><rect x="-7.50" y="3.20" width="2.4" height="2.4" fill="#1e8fff"/><path d="M2 7.7L8 2.4L10.7 5.2L5 10.7Z" fill="#f0b545"/><circle cx="10.2" cy="3" r="2.2" fill="#ee2a2a"/><path d="M2 7.7L5 10.7L0.6 12.4Z" fill="#555"/></g><g transform="translate(1216.5 1199.8)" opacity="0.3"><path d="M10.5 -7Q0 -15 -10.5 -7.5" stroke="#333" stroke-width="1.1" fill="none"/><path d="M-12.3 -6.2L-8.5 -9L-10.5 -11Z" fill="#333"/><path d="M-13.5 -1.5Q0 -14 13.5 -1.5L9 2.5Q0 -5.5 -8.5 2.5Z" fill="#8dcbfb"/><path d="M-13.5 -1.5L-8.5 2.5V11L-13.5 6.5Z" fill="#4793d1"/><path d="M-8.5 2.5Q0 -5.5 9 2.5V10.5Q0 2.5 -8.5 11Z" fill="#6bb0e6"/><path d="M9 2.5L13.5 -1.5V6.5L9 10.5Z" fill="#fafafa" stroke="#444" stroke-width="1"/></g><path d="M283.8 1179.2L290 1172M292.3 1179.2L298.5 1172M300.8 1179.2L307.8 1172" stroke="#4a4a4a" stroke-width="3.3" fill="none"/></svg>
<svg class="b" style="left:0;top:0" width="2400" height="1238" viewBox="0 0 2400 1238"><defs>
<linearGradient id="mon" x1="0" y1="0" x2="0" y2="1"><stop offset="0" stop-color="#9fbfe8"/><stop offset="1" stop-color="#7fa5d8"/></linearGradient>
<linearGradient id="glass" x1="0" y1="0" x2="1" y2="1"><stop offset="0" stop-color="#f4fafa"/><stop offset="1" stop-color="#cfe0e0"/></linearGradient>
<linearGradient id="grd" x1="0" y1="0" x2="0" y2="1"><stop offset="0" stop-color="#ffffff"/><stop offset="0.4" stop-color="#f2f2f4"/><stop offset="1" stop-color="#8c96ac"/></linearGradient>
</defs><path d="M1016.8 1120L1022 1113.2L1027.2 1120H1024.2V1137.4H1019.8V1120Z" fill="#f6f6f6" stroke="#444" stroke-width="1.1" stroke-linejoin="round"/><path d="M1026 1123.6C1034 1124.6 1036 1129.6 1029 1131.4C1024 1132.6 1016 1132.2 1012.5 1130.6" fill="none" stroke="#333" stroke-width="1.5"/><path d="M1018 1123.6C1012 1124.4 1009.4 1127 1011.5 1129.6" fill="none" stroke="#333" stroke-width="1.5"/><path d="M1010 1127.6L1015.6 1129L1012 1133.2Z" fill="#333"/><path d="M1043.8 1122.8H1053.2L1048.5 1129.4Z" fill="#222"/><path d="M1067 1122L1072 1115L1073.5 1120L1083 1116.6L1084 1122Z" fill="#c8c8c8" stroke="#555" stroke-width="1.1" stroke-linejoin="round"/><rect x="1065.6" y="1121.6" width="22.4" height="15.4" rx="1.2" fill="#e8e8e8" stroke="#555" stroke-width="1.4"/><rect x="1068.6" y="1125.6" width="16.4" height="8" fill="#9098a8" stroke="#5a6070" stroke-width="0.8"/><path d="M1114.5 1137.4C1112 1133 1109.6 1129.5 1108.2 1127.4C1107.4 1125.8 1109.2 1124.6 1110.6 1125.8L1114 1129V1117.4C1114 1115.4 1116.8 1115.4 1116.9 1117.4V1114.6C1117 1112.6 1120 1112.6 1120 1114.6V1115.4C1120.2 1113.6 1123 1113.8 1123 1115.6V1118C1123.4 1116.4 1126 1116.6 1126 1118.6V1127L1129.4 1123.4C1130.8 1122.2 1132.6 1123.6 1131.6 1125.2C1129.6 1128.6 1127.6 1133 1125 1137.4Z" fill="#fcfcfc" stroke="#333" stroke-width="1.2" stroke-linejoin="round"/><path d="M1116.9 1117.4V1125M1120 1115.4V1125M1123 1118V1125.4" stroke="#333" stroke-width="1.1" fill="none"/><path d="M1165.6 1128.6L1174.8 1136.4" stroke="#333" stroke-width="3.4" stroke-linecap="round"/><circle cx="1159.4" cy="1121.8" r="8.2" fill="url(#glass)" stroke="#444" stroke-width="1.5"/><path d="M1170.6 1116.4H1176M1173.3 1113.8V1119M1170.8 1121.6H1176" stroke="#333" stroke-width="1.3"/><rect x="1194.4" y="1114.4" width="24.4" height="23.6" fill="none" stroke="#555" stroke-width="1" stroke-dasharray="3.4 2"/><path d="M1208.8 1129.4L1217.6 1137" stroke="#333" stroke-width="3.4" stroke-linecap="round"/><circle cx="1203.2" cy="1123" r="8.2" fill="url(#glass)" stroke="#444" stroke-width="1.5"/><path d="M1228.7 1122.8H1238.2L1233.45 1129.4Z" fill="#222"/><rect x="1249.8" y="1113.4" width="24.2" height="18.8" rx="1" fill="#fafafa" stroke="#444" stroke-width="1.4"/><rect x="1252.8" y="1116.4" width="18.2" height="12.8" rx="1.4" fill="url(#mon)" stroke="#3a5a94" stroke-width="1.2"/><path d="M1258.6 1132.6H1265.4L1266.4 1135.4H1257.6Z" fill="#e4e8f0" stroke="#555" stroke-width="0.9"/><rect x="1254.6" y="1135.2" width="14.8" height="2.8" rx="1.4" fill="#e8ecf4" stroke="#4a4a4a" stroke-width="1.1"/><path d="M1278.8 1122.8H1288.3L1283.55 1129.4Z" fill="#222"/><rect x="1301.4" y="1114.8" width="23.2" height="23" rx="1.2" fill="url(#grd)"/><path d="M1304.60 1115V1137.6M1307.92 1115V1137.6M1311.24 1115V1137.6M1314.56 1115V1137.6M1317.88 1115V1137.6M1321.20 1115V1137.6M1301.6 1118.00H1324.4M1301.6 1121.28H1324.4M1301.6 1124.56H1324.4M1301.6 1127.84H1324.4M1301.6 1131.12H1324.4M1301.6 1134.40H1324.4" stroke="#666" stroke-width="0.95" fill="none" opacity="0.85"/><rect x="1301.4" y="1114.8" width="23.2" height="23" rx="1.2" fill="none" stroke="#444" stroke-width="1.3"/><path d="M1330.4 1122.8H1339.9L1335.15 1129.4Z" fill="#222"/><rect x="1352.8" y="1115.8" width="24" height="21.4" rx="2.2" fill="#90b2e0" stroke="#4c6ea6" stroke-width="1.2"/><path d="M1364.8 1115.8V1137.2M1352.8 1126.5H1376.8" stroke="#4c6ea6" stroke-width="1.3"/><path d="M1355 1118.2H1362.6V1124.2H1355ZM1367 1118.2H1374.6V1124.2H1367ZM1355 1128.8H1362.6V1134.8H1355ZM1367 1128.8H1374.6V1134.8H1367Z" fill="none" stroke="#b4ccec" stroke-width="0.7"/><path d="M1381.9 1122.8H1391.4L1386.65 1129.4Z" fill="#222"/></svg>
</body></html>
